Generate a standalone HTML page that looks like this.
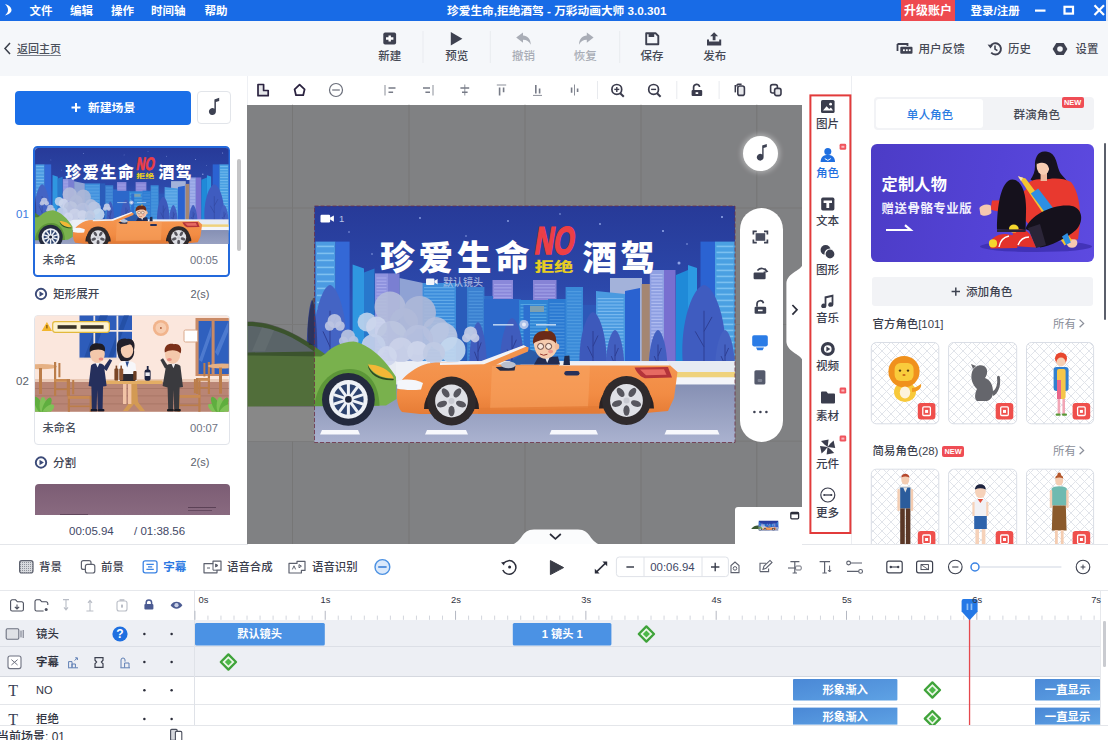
<!DOCTYPE html>
<html lang="zh"><head><meta charset="utf-8"><title>万彩动画大师</title><style>
html,body{margin:0;padding:0;background:#fff;}
body{width:1108px;height:740px;position:relative;overflow:hidden;font-family:"Liberation Sans",sans-serif;}
#app{position:absolute;left:0;top:0;width:1108px;height:740px;overflow:hidden;background:#fff;}
#app>div,#app>svg,#app>span{position:absolute;display:block;box-sizing:border-box;}
#app>span{color:transparent;white-space:nowrap;line-height:1.2;}
svg text{font-family:"Liberation Sans","Noto Sans CJK SC",sans-serif;}
</style></head><body>
<div id="app">
<div style="left:0px;top:0px;width:1108px;height:21px;background:#186be6;"></div>
<div style="left:1106px;top:0px;width:2px;height:21px;background:#dfe9f8;"></div>
<svg style="left:0px;top:0px;" width="20" height="21"><path d="M5 4 C9 5 11.5 7.5 11.5 10 C11.5 12.5 9 14.5 5 15.5 C7 13.5 8 12 8 10 C8 8 7 6 5 4Z" fill="#fff"/></svg>
<div style="left:901px;top:0px;width:54px;height:20.5px;background:#ee4a4f;"></div>
<svg style="left:0px;top:0px;" width="1108" height="21"><rect x="1035" y="9.5" width="10.5" height="2.2" fill="#fff"/><rect x="1064.5" y="6.8" width="8.5" height="6.8" fill="none" stroke="#fff" stroke-width="2.2"/><path d="M1094.5 5.2 L1104 15 M1104 5.2 L1094.5 15" stroke="#fff" stroke-width="2.2" fill="none"/></svg>
<div style="left:0px;top:21px;width:1108px;height:55px;background:#f5f7fa;"></div>
<svg style="left:0px;top:0px;" width="20" height="76"><path d="M10 43 L5 48.5 L10 54" stroke="#3a3f4a" stroke-width="1.5" fill="none"/></svg>
<div style="left:17px;top:54.6px;width:44.4px;height:1px;background:#7a7f8a;"></div>
<svg style="left:0px;top:0px;" width="1108" height="76"><rect x="383.3" y="32.6" width="12.8" height="11.9" rx="1.8" fill="#3e4150"/><path d="M386 38.5 h7.4 M389.7 35.6 v5.8" stroke="#fff" stroke-width="2.4"/><path d="M450.8 32 L462.4 38.8 L450.8 45.5Z" fill="#3e4150"/><path d="M516.2 37.6 L523 32.4 V35.6 C527.5 35.8 530.6 39 530.8 44.7 C529 41.4 526.8 39.9 523 39.8 V42.8Z" fill="#a9adb6"/><path d="M593.6 37.6 L586.8 32.4 V35.6 C582.3 35.8 579.2 39 579 44.7 C580.8 41.4 583 39.9 586.8 39.8 V42.8Z" fill="#a9adb6"/><path d="M646.2 33.2 h9.3 l2.8 2.8 v8.3 h-12.1 Z" fill="none" stroke="#3e4150" stroke-width="1.9" stroke-linejoin="round"/><rect x="648.6" y="33.4" width="5.6" height="3.6" fill="#3e4150"/><path d="M708 39.5 v5 h12.2 v-5" fill="none" stroke="#3e4150" stroke-width="2"/><rect x="708" y="41.5" width="12.2" height="3" fill="#3e4150"/><path d="M714.1 32.2 l4 4 h-2.6 v4 h-2.8 v-4 h-2.6Z" fill="#3e4150"/><rect x="422.5" y="31" width="1" height="32" fill="#e9ebef"/><rect x="489.8" y="31" width="1" height="32" fill="#e9ebef"/><rect x="619.2" y="31" width="1" height="32" fill="#e9ebef"/></svg>
<svg style="left:0px;top:0px;" width="1108" height="76"><path d="M897.5 44 h10 v2 M897.5 44 v7" stroke="#3e4150" stroke-width="1.8" fill="none"/><rect x="900.3" y="46.8" width="12.2" height="7" rx="1" fill="#3e4150"/><rect x="903" y="49.3" width="1.8" height="1.8" fill="#fff"/><rect x="905.9" y="49.3" width="1.8" height="1.8" fill="#fff"/><rect x="908.8" y="49.3" width="1.8" height="1.8" fill="#fff"/><path d="M990.4 46.2 A5.6 5.6 0 1 1 991.2 52.6" fill="none" stroke="#3e4150" stroke-width="1.9"/><path d="M987.6 44.6 l2.8 3.8 l2.6 -3.2Z" fill="#3e4150"/><path d="M995 45.5 v3.6 l2.4 1.6" fill="none" stroke="#3e4150" stroke-width="1.6"/><path d="M1056.3 43 h7.4 l3.7 6 l-3.7 6 h-7.4 l-3.7 -6Z" fill="#3e4150"/><circle cx="1060" cy="49" r="2.8" fill="#f5f7fa"/></svg>
<div style="left:0px;top:76px;width:247.5px;height:468.5px;background:#fff;"></div>
<div style="left:14.5px;top:90.5px;width:176.5px;height:34px;background:#1b6fe8;border-radius:4px;"></div>
<svg style="left:0px;top:0px;" width="200" height="130"><path d="M71.5 107.5 h9 M76 103 v9" stroke="#fff" stroke-width="2"/></svg>
<div style="left:197px;top:91px;width:33.5px;height:33px;background:#fff;border:1px solid #e2e5ea;border-radius:4px;"></div>
<svg style="left:0px;top:0px;" width="247" height="130"><path d="M214.4 99.4 l4.8 -1.6 v3.2 l-3.3 1.1 v9.4 a3.5 3.5 0 1 1 -1.5 -2.8Z" fill="#3d4152"/></svg>
<div style="left:237.4px;top:159px;width:3.6px;height:92px;background:#c4c4c6;border-radius:2px;"></div>
<div style="left:33.4px;top:146.2px;width:196.8px;height:130.4px;background:#fff;border:2px solid #2369dc;border-radius:4.5px;"></div>
<svg style="left:35px;top:147.8px;border-radius:3px 3px 0 0;" preserveAspectRatio="none" width="193.6" height="96.2" viewBox="314.5 206 420.5 209"><use href="#scn"/><use href="#scntitle"/></svg>
<svg style="left:0px;top:0px;" width="247" height="480"><circle cx="41" cy="294" r="5.2" fill="#fff" stroke="#3b4a78" stroke-width="1.9"/><path d="M39.5 291.3 l4.4 2.7 l-4.4 2.7Z" fill="#3b4a78"/><circle cx="41" cy="462.5" r="5.2" fill="#fff" stroke="#3b4a78" stroke-width="1.9"/><path d="M39.5 459.8 l4.4 2.7 l-4.4 2.7Z" fill="#3b4a78"/></svg>
<div style="left:34.2px;top:314.6px;width:195.6px;height:130px;background:#fff;border:1px solid #e1e4ea;border-radius:4px;"></div>
<svg style="left:0px;top:0px;" width="247" height="420"><defs><clipPath id="t2c"><path d="M35 319 a3.6 3.6 0 0 1 3.6 -3.6 H225.2 a3.6 3.6 0 0 1 3.6 3.6 V411.8 H35Z"/></clipPath></defs><g clip-path="url(#t2c)"><rect x="35" y="315" width="194" height="97" fill="#fbe7dd"/><rect x="35" y="381" width="194" height="31" fill="#b98575"/><rect x="35" y="379" width="194" height="3" fill="#e9c9b6"/><rect x="35" y="388" width="194" height=".8" fill="#a57464"/><rect x="35" y="395.5" width="194" height=".8" fill="#a57464"/><rect x="35" y="403.5" width="194" height=".8" fill="#a57464"/><rect x="79.5" y="315" width="52.5" height="43.4" fill="#2d5cba"/><path d="M84 358 l16 -43 h8 l-16 43Z M108 358 l16 -43 h5 l-16 43Z" fill="#2450a6"/><path d="M94.3 315 v43.4 M117.4 315 v43.4 M79.5 330.8 h52.5" stroke="#f3e8e4" stroke-width="1.8"/><rect x="78.6" y="357.6" width="54.4" height="2" fill="#f0ddd2"/><rect x="195.5" y="318" width="34" height="58" fill="#c98a66"/><rect x="198.6" y="321" width="13" height="53" fill="#2f60be"/><rect x="214.6" y="321" width="15" height="53" fill="#2f60be"/><path d="M199 360 l12 -34 v10 l-9 26Z M215 352 l13 -30 v10 l-10 24Z" fill="#5a86d6" opacity=".7"/><circle cx="160.9" cy="328" r="8" fill="#f1b48c"/><circle cx="160.9" cy="328" r="5.4" fill="#f7cdb0"/><circle cx="160.9" cy="328" r="1" fill="#b0603c"/><rect x="184" y="330" width="13.6" height="12" rx="1.5" fill="#fff" stroke="#d9a98c" stroke-width="1"/><path d="M41.7 331 l5.2 -9 l5.2 9Z" fill="#f3b62c"/><rect x="46.3" y="325" width="1.2" height="3.4" fill="#7a4a10"/><rect x="52.7" y="321.7" width="56.7" height="10.6" rx="2.5" fill="#fdf3cf" stroke="#e2b93c" stroke-width="1.2"/><rect x="57.6" y="325.2" width="19" height="3.6" fill="#3a3326"/><rect x="80.6" y="325.2" width="23" height="3.6" fill="#3a3326"/><ellipse cx="42" cy="366.6" rx="15" ry="2.6" fill="#e6b184"/><rect x="39" y="368" width="3" height="26" fill="#bb7d4a"/><rect x="54" y="362" width="2.2" height="34" fill="#bb7d4a"/><rect x="58.4" y="363" width="2" height="14.28" fill="#bb7d4a"/><rect x="54" y="379" width="15" height="2.8" fill="#c98a52"/><rect x="66.8" y="379" width="2.2" height="17" fill="#bb7d4a"/><rect x="54" y="388.52" width="15" height="1.6" fill="#bb7d4a"/><rect x="67.8" y="379" width="2.2" height="34" fill="#bb7d4a"/><rect x="72.2" y="380" width="2" height="14.28" fill="#bb7d4a"/><rect x="67.8" y="396" width="24" height="2.8" fill="#c98a52"/><rect x="89.6" y="396" width="2.2" height="17" fill="#bb7d4a"/><rect x="67.8" y="405.52" width="24" height="1.6" fill="#bb7d4a"/><rect x="198.3" y="378" width="2.2" height="34" fill="#bb7d4a"/><rect x="193.9" y="379" width="2" height="14.28" fill="#bb7d4a"/><rect x="177.5" y="395" width="23" height="2.8" fill="#c98a52"/><rect x="177.5" y="395" width="2.2" height="17" fill="#bb7d4a"/><rect x="177.5" y="404.52" width="23" height="1.6" fill="#bb7d4a"/><rect x="207.8" y="362" width="2.2" height="32" fill="#bb7d4a"/><rect x="203.4" y="363" width="2" height="13.44" fill="#bb7d4a"/><rect x="196" y="378" width="14" height="2.8" fill="#c98a52"/><rect x="196" y="378" width="2.2" height="16" fill="#bb7d4a"/><rect x="196" y="386.96" width="14" height="1.6" fill="#bb7d4a"/><ellipse cx="222" cy="366" rx="14" ry="2.6" fill="#e6b184"/><rect x="219" y="367.6" width="3" height="26" fill="#bb7d4a"/><rect x="105.6" y="380.4" width="57" height="3.6" rx="1.4" fill="#e3ad64"/><path d="M131 384 h6 l1 18 l7 9 h-5 l-6 -7 l-6 7 h-5 l7 -9Z" fill="#d39a54"/><path d="M117 347 C116 340 122 337.5 127 339 C133 338 136 343 134 350 C135 355 132 360 128 361 L121 361 C118.5 358 116.5 352 117 347Z" fill="#23202a"/><ellipse cx="127" cy="350.5" rx="6.2" ry="7.4" fill="#f6cdb2"/><path d="M120 348 C121 342 127 340.5 133 343.5 C130 344.5 124 345.5 120 348Z" fill="#23202a"/><path d="M119 364 C121 360 133 360 135.5 364 L137 381 H118Z" fill="#f7f7fa"/><path d="M125.4 361.6 l1.8 6 l1.8 -6Z" fill="#2b4c8e"/><rect x="120" y="374" width="15" height="7" fill="#2b2a33"/><rect x="123" y="384" width="3.4" height="20" fill="#f2c4a6"/><rect x="128" y="384" width="3.4" height="20" fill="#f2c4a6"/><rect x="114.4" y="368.6" width="4" height="12" rx="1" fill="#7a4526"/><rect x="115.6" y="365.6" width="1.6" height="3.6" fill="#7a4526"/><rect x="119.2" y="368.6" width="4" height="12" rx="1" fill="#8a5230"/><rect x="120.4" y="365.6" width="1.6" height="3.6" fill="#8a5230"/><rect x="133.2" y="371" width="3.4" height="9.6" rx="1" fill="#6a3c22"/><rect x="144.6" y="369.4" width="6" height="11.4" rx="2" fill="#1c2240"/><rect x="146.8" y="366" width="1.8" height="4" fill="#1c2240"/><rect x="145.4" y="372.4" width="4.4" height="3.6" fill="#e9e9f0"/><path d="M91 365.5 C93 362.5 102 362.5 104 365.5 L106.6 386 L103 386.5 L102.6 409 H97.8 L97.2 390 L96.6 409 H91.8 L91.4 386.5 L88.6 386Z" fill="#252f5c"/><path d="M95.6 363 l2 4.6 l2 -4.6Z" fill="#f2f2f6"/><path d="M103 368 l6.6 -9 l2.6 1.6 l-5.6 10.4Z" fill="#252f5c"/><ellipse cx="97.4" cy="354" rx="7.4" ry="9" fill="#f4c8ab"/><path d="M89.8 352 C88.4 344 95 342.5 98.4 343.6 C104 342.8 106 347.8 104.8 351.6 C102 349 95 348.6 89.8 352Z" fill="#201c22"/><ellipse cx="101" cy="359" rx="2.4" ry="1.5" fill="#e88a7e"/><rect x="90.6" y="409" width="6.8" height="2.4" rx="1" fill="#15182c"/><rect x="97.6" y="409" width="6.8" height="2.4" rx="1" fill="#15182c"/><path d="M166 366 C168 363 178 363 180.4 366 L183 387 L179.6 387.6 L179 409 H174.2 L173.6 390 L173 409 H168.2 L167.6 387.6 L162.6 386Z" fill="#3a3a3e"/><path d="M165 368.5 l-4.6 -8.6 l2.6 -1.6 l5.6 8.6Z" fill="#3a3a3e"/><path d="M171.4 363.6 l2 4.6 l2 -4.6Z" fill="#eeeef2"/><ellipse cx="172.6" cy="354.6" rx="7.6" ry="9.2" fill="#f4c8ab"/><path d="M164.8 352.6 C163.4 344.6 170 343 174 344.2 C180 343.2 182.4 348.4 180.6 353.4 C177 349.6 170 349.2 164.8 352.6Z" fill="#7b3019"/><ellipse cx="169.4" cy="359.6" rx="2.4" ry="1.5" fill="#e88a7e"/><rect x="167" y="409" width="6.8" height="2.4" rx="1" fill="#1c1c20"/><rect x="174" y="409" width="6.8" height="2.4" rx="1" fill="#1c1c20"/><ellipse cx="43" cy="406.5" rx="3.4" ry="7.5" fill="#7fc257" transform="rotate(-50 43 414)"/><ellipse cx="43" cy="404.5" rx="3.4" ry="9.5" fill="#5fae3f" transform="rotate(-25 43 414)"/><ellipse cx="43" cy="405.5" rx="3.4" ry="8.5" fill="#7fc257" transform="rotate(0 43 414)"/><ellipse cx="43" cy="405" rx="3.4" ry="9" fill="#5fae3f" transform="rotate(25 43 414)"/><ellipse cx="43" cy="407" rx="3.4" ry="7" fill="#7fc257" transform="rotate(50 43 414)"/><ellipse cx="220" cy="406.5" rx="3.4" ry="7.5" fill="#7fc257" transform="rotate(-50 220 414)"/><ellipse cx="220" cy="404.5" rx="3.4" ry="9.5" fill="#5fae3f" transform="rotate(-25 220 414)"/><ellipse cx="220" cy="405.5" rx="3.4" ry="8.5" fill="#7fc257" transform="rotate(0 220 414)"/><ellipse cx="220" cy="405" rx="3.4" ry="9" fill="#5fae3f" transform="rotate(25 220 414)"/><ellipse cx="220" cy="407" rx="3.4" ry="7" fill="#7fc257" transform="rotate(50 220 414)"/></g></svg>
<div style="left:34.5px;top:484px;width:195px;height:31px;background:linear-gradient(#7c5d74,#896a80);border-radius:4px 4px 0 0;"></div>
<div style="left:188px;top:506.5px;width:28px;height:1.2px;background:rgba(40,20,40,.45);"></div>
<div style="left:188px;top:510px;width:24px;height:1.2px;background:rgba(40,20,40,.35);"></div>
<div style="left:60px;top:513.6px;width:28px;height:1.2px;background:rgba(40,20,40,.4);"></div>
<div style="left:0px;top:515px;width:247.5px;height:29px;background:#fff;"></div>
<div style="left:247.5px;top:76px;width:554.5px;height:28.6px;background:#fff;"></div>
<div style="left:247px;top:76px;width:1px;height:29px;background:#eef0f4;"></div>
<svg style="left:0px;top:0px;" width="1108" height="110"><path d="M258 84.5 h5.6 v6 h4.6 v5.2 h-10.2Z" fill="#e6e7ea" stroke="#2b2340" stroke-width="1.7" stroke-linejoin="round"/><path d="M299.6 84.6 L304.6 89.4 L303.2 95.2 H296 L294.6 89.4Z" fill="none" stroke="#2b2340" stroke-width="1.8" stroke-linejoin="round"/><circle cx="336" cy="90" r="6.5" fill="none" stroke="#6a6e7a" stroke-width="1.2"/><path d="M332.2 90 h7.6" stroke="#6a6e7a" stroke-width="1.2"/><path d="M385 85 v10.5" stroke="#8b8f99" stroke-width="1"/><path d="M388.5 88 h7 M388.5 92.2 h4.6" stroke="#777b87" stroke-width="1.6"/><path d="M433 85 v10.5" stroke="#8b8f99" stroke-width="1"/><path d="M423 88 h7 M425.4 92.2 h4.6" stroke="#777b87" stroke-width="1.6"/><path d="M464.8 84.5 v11" stroke="#8b8f99" stroke-width="1"/><path d="M460.4 88 h8.8 M462 92.2 h5.6" stroke="#777b87" stroke-width="1.6"/><path d="M496.8 85 h9.4" stroke="#8b8f99" stroke-width="1"/><path d="M499.6 87.6 v8 M503.6 87.6 v4.6" stroke="#777b87" stroke-width="1.6"/><path d="M533 95.4 h9" stroke="#8b8f99" stroke-width="1"/><path d="M535.8 85 v8.4 M539.6 88.6 v4.8" stroke="#777b87" stroke-width="1.6"/><path d="M574.5 84.5 v11" stroke="#8b8f99" stroke-width="1"/><path d="M571.6 87.4 v5.4 M577.6 88.4 v3.6" stroke="#777b87" stroke-width="1.6"/><rect x="597" y="81" width="1" height="18" fill="#e8eaee"/><rect x="676.3" y="81" width="1" height="18" fill="#e8eaee"/><rect x="718.6" y="81" width="1" height="18" fill="#e8eaee"/><circle cx="616.8" cy="89.4" r="4.9" fill="none" stroke="#3a3b4c" stroke-width="1.7"/><path d="M620.2 93.2 l3.6 3.6" stroke="#3a3b4c" stroke-width="2"/><path d="M614.3 89.4 h5" stroke="#3a3b4c" stroke-width="1.4"/><path d="M616.8 86.9 v5" stroke="#3a3b4c" stroke-width="1.4"/><circle cx="653.6" cy="89.4" r="4.9" fill="none" stroke="#3a3b4c" stroke-width="1.7"/><path d="M657 93.2 l3.6 3.6" stroke="#3a3b4c" stroke-width="2"/><path d="M651.1 89.4 h5" stroke="#3a3b4c" stroke-width="1.4"/><rect x="691.6" y="90" width="10.6" height="6" rx="1" fill="#3a3b4c"/><path d="M693.6 90 v-2.4 a3 3 0 0 1 6 -0.6" fill="none" stroke="#3a3b4c" stroke-width="1.7"/><rect x="695.6" y="92.2" width="2.6" height="1.8" fill="#fff"/><path d="M737 86.6 v-1.4 a1 1 0 0 1 1 -1 h3.6" fill="none" stroke="#3a3b4c" stroke-width="1.5"/><rect x="737.8" y="86" width="6.6" height="9.4" rx="2" fill="#e8e9ec" stroke="#3a3b4c" stroke-width="1.6"/><path d="M735.3 85 v7.4" stroke="#3a3b4c" stroke-width="1.5"/><rect x="770.6" y="84.6" width="6.8" height="8.4" rx="2" fill="none" stroke="#3a3b4c" stroke-width="1.6"/><rect x="774.6" y="88.4" width="6.4" height="7.2" rx="2" fill="#e8e9ec" stroke="#3a3b4c" stroke-width="1.6"/></svg>
<div style="left:247px;top:104.6px;width:555px;height:440px;background:#808183;"></div>
<svg style="left:0px;top:0px;" width="1108" height="740"><defs><clipPath id="cvclip"><rect x="247.5" y="104.6" width="554.5" height="440"/></clipPath></defs><g clip-path="url(#cvclip)"><rect x="292" y="104.6" width="1" height="440" fill="#767676"/><rect x="408.5" y="104.6" width="1" height="440" fill="#767676"/><rect x="524.5" y="104.6" width="1" height="440" fill="#767676"/><rect x="640.5" y="104.6" width="1" height="440" fill="#767676"/><rect x="756.3" y="104.6" width="1" height="440" fill="#767676"/><rect x="247.5" y="207.5" width="554.5" height="1" fill="#797979"/><rect x="247.5" y="324" width="554.5" height="1" fill="#797979"/><rect x="247.5" y="440.7" width="554.5" height="1" fill="#797979"/><rect x="247.5" y="406" width="67" height="35" fill="#888888"/><g id="scn"><defs><linearGradient id="sky" x1="0" y1="0" x2="0" y2="1"><stop offset="0" stop-color="#273a98"/><stop offset="0.45" stop-color="#2c48aa"/><stop offset="1" stop-color="#3f6fca"/></linearGradient><linearGradient id="road" x1="0" y1="0" x2="0" y2="1"><stop offset="0" stop-color="#8690b4"/><stop offset="1" stop-color="#aab2cf"/></linearGradient><linearGradient id="orng" x1="0" y1="0" x2="0" y2="1"><stop offset="0" stop-color="#f69a55"/><stop offset="0.7" stop-color="#f28c44"/><stop offset="1" stop-color="#e67c36"/></linearGradient></defs><rect x="314.5" y="206" width="420.5" height="180" fill="url(#sky)"/><circle cx="420" cy="218" r="0.9" fill="#8fa4e6"/><circle cx="466" cy="236" r="0.8" fill="#8fa4e6"/><circle cx="372" cy="254" r="0.8" fill="#8fa4e6"/><circle cx="508" cy="221" r="0.9" fill="#8fa4e6"/><circle cx="600" cy="224" r="0.9" fill="#8fa4e6"/><circle cx="663" cy="231" r="1.1" fill="#8fa4e6"/><circle cx="679" cy="263" r="1.5" fill="#8fa4e6"/><circle cx="722" cy="217" r="1.1" fill="#8fa4e6"/><circle cx="640" cy="246" r="0.8" fill="#8fa4e6"/><circle cx="349" cy="232" r="0.8" fill="#8fa4e6"/><circle cx="560" cy="214" r="0.8" fill="#8fa4e6"/><circle cx="687" cy="244" r="0.8" fill="#8fa4e6"/><rect x="492.5" y="280" width="20.5" height="110" fill="#8a88da"/><rect x="494" y="284" width="17.5" height="1.2" fill="#a3a2e8"/><rect x="494" y="287.2" width="17.5" height="1.2" fill="#a3a2e8"/><rect x="494" y="290.4" width="17.5" height="1.2" fill="#a3a2e8"/><rect x="494" y="293.6" width="17.5" height="1.2" fill="#a3a2e8"/><rect x="494" y="296.8" width="17.5" height="1.2" fill="#a3a2e8"/><rect x="494" y="300" width="17.5" height="1.2" fill="#a3a2e8"/><rect x="494" y="303.2" width="17.5" height="1.2" fill="#a3a2e8"/><rect x="494" y="306.4" width="17.5" height="1.2" fill="#a3a2e8"/><rect x="494" y="309.6" width="17.5" height="1.2" fill="#a3a2e8"/><rect x="494" y="312.8" width="17.5" height="1.2" fill="#a3a2e8"/><rect x="494" y="316" width="17.5" height="1.2" fill="#a3a2e8"/><rect x="494" y="319.2" width="17.5" height="1.2" fill="#a3a2e8"/><rect x="494" y="322.4" width="17.5" height="1.2" fill="#a3a2e8"/><rect x="494" y="325.6" width="17.5" height="1.2" fill="#a3a2e8"/><rect x="494" y="328.8" width="17.5" height="1.2" fill="#a3a2e8"/><rect x="494" y="332" width="17.5" height="1.2" fill="#a3a2e8"/><rect x="494" y="335.2" width="17.5" height="1.2" fill="#a3a2e8"/><rect x="494" y="338.4" width="17.5" height="1.2" fill="#a3a2e8"/><rect x="494" y="341.6" width="17.5" height="1.2" fill="#a3a2e8"/><rect x="494" y="344.8" width="17.5" height="1.2" fill="#a3a2e8"/><rect x="494" y="348" width="17.5" height="1.2" fill="#a3a2e8"/><rect x="494" y="351.2" width="17.5" height="1.2" fill="#a3a2e8"/><rect x="494" y="354.4" width="17.5" height="1.2" fill="#a3a2e8"/><rect x="494" y="357.6" width="17.5" height="1.2" fill="#a3a2e8"/><rect x="494" y="360.8" width="17.5" height="1.2" fill="#a3a2e8"/><rect x="494" y="364" width="17.5" height="1.2" fill="#a3a2e8"/><rect x="494" y="367.2" width="17.5" height="1.2" fill="#a3a2e8"/><rect x="494" y="370.4" width="17.5" height="1.2" fill="#a3a2e8"/><rect x="494" y="373.6" width="17.5" height="1.2" fill="#a3a2e8"/><rect x="494" y="376.8" width="17.5" height="1.2" fill="#a3a2e8"/><rect x="494" y="380" width="17.5" height="1.2" fill="#a3a2e8"/><rect x="494" y="383.2" width="17.5" height="1.2" fill="#a3a2e8"/><rect x="533" y="280" width="23.5" height="110" fill="#8683d6"/><rect x="534.5" y="284" width="20.5" height="1.2" fill="#a09fe6"/><rect x="534.5" y="287.2" width="20.5" height="1.2" fill="#a09fe6"/><rect x="534.5" y="290.4" width="20.5" height="1.2" fill="#a09fe6"/><rect x="534.5" y="293.6" width="20.5" height="1.2" fill="#a09fe6"/><rect x="534.5" y="296.8" width="20.5" height="1.2" fill="#a09fe6"/><rect x="534.5" y="300" width="20.5" height="1.2" fill="#a09fe6"/><rect x="534.5" y="303.2" width="20.5" height="1.2" fill="#a09fe6"/><rect x="534.5" y="306.4" width="20.5" height="1.2" fill="#a09fe6"/><rect x="534.5" y="309.6" width="20.5" height="1.2" fill="#a09fe6"/><rect x="534.5" y="312.8" width="20.5" height="1.2" fill="#a09fe6"/><rect x="534.5" y="316" width="20.5" height="1.2" fill="#a09fe6"/><rect x="534.5" y="319.2" width="20.5" height="1.2" fill="#a09fe6"/><rect x="534.5" y="322.4" width="20.5" height="1.2" fill="#a09fe6"/><rect x="534.5" y="325.6" width="20.5" height="1.2" fill="#a09fe6"/><rect x="534.5" y="328.8" width="20.5" height="1.2" fill="#a09fe6"/><rect x="534.5" y="332" width="20.5" height="1.2" fill="#a09fe6"/><rect x="534.5" y="335.2" width="20.5" height="1.2" fill="#a09fe6"/><rect x="534.5" y="338.4" width="20.5" height="1.2" fill="#a09fe6"/><rect x="534.5" y="341.6" width="20.5" height="1.2" fill="#a09fe6"/><rect x="534.5" y="344.8" width="20.5" height="1.2" fill="#a09fe6"/><rect x="534.5" y="348" width="20.5" height="1.2" fill="#a09fe6"/><rect x="534.5" y="351.2" width="20.5" height="1.2" fill="#a09fe6"/><rect x="534.5" y="354.4" width="20.5" height="1.2" fill="#a09fe6"/><rect x="534.5" y="357.6" width="20.5" height="1.2" fill="#a09fe6"/><rect x="534.5" y="360.8" width="20.5" height="1.2" fill="#a09fe6"/><rect x="534.5" y="364" width="20.5" height="1.2" fill="#a09fe6"/><rect x="534.5" y="367.2" width="20.5" height="1.2" fill="#a09fe6"/><rect x="534.5" y="370.4" width="20.5" height="1.2" fill="#a09fe6"/><rect x="534.5" y="373.6" width="20.5" height="1.2" fill="#a09fe6"/><rect x="534.5" y="376.8" width="20.5" height="1.2" fill="#a09fe6"/><rect x="534.5" y="380" width="20.5" height="1.2" fill="#a09fe6"/><rect x="534.5" y="383.2" width="20.5" height="1.2" fill="#a09fe6"/><rect x="349.6" y="300" width="3.4" height="90" fill="#2a54b4"/><rect x="484" y="296" width="9" height="94" fill="#2f6cc8"/><rect x="548" y="299" width="12" height="91" fill="#2b7ad2"/><rect x="583" y="305" width="14" height="85" fill="#2d58b8"/><rect x="315.5" y="241.6" width="20" height="148.4" fill="#4c9be2"/><rect x="317" y="245.6" width="17" height="1.6" fill="#7fc0f0"/><rect x="317" y="252.6" width="17" height="1.6" fill="#7fc0f0"/><rect x="317" y="259.6" width="17" height="1.6" fill="#7fc0f0"/><rect x="317" y="266.6" width="17" height="1.6" fill="#7fc0f0"/><rect x="317" y="273.6" width="17" height="1.6" fill="#7fc0f0"/><rect x="317" y="280.6" width="17" height="1.6" fill="#7fc0f0"/><rect x="317" y="287.6" width="17" height="1.6" fill="#7fc0f0"/><rect x="317" y="294.6" width="17" height="1.6" fill="#7fc0f0"/><rect x="317" y="301.6" width="17" height="1.6" fill="#7fc0f0"/><rect x="317" y="308.6" width="17" height="1.6" fill="#7fc0f0"/><rect x="317" y="315.6" width="17" height="1.6" fill="#7fc0f0"/><rect x="317" y="322.6" width="17" height="1.6" fill="#7fc0f0"/><rect x="317" y="329.6" width="17" height="1.6" fill="#7fc0f0"/><rect x="317" y="336.6" width="17" height="1.6" fill="#7fc0f0"/><rect x="317" y="343.6" width="17" height="1.6" fill="#7fc0f0"/><rect x="317" y="350.6" width="17" height="1.6" fill="#7fc0f0"/><rect x="317" y="357.6" width="17" height="1.6" fill="#7fc0f0"/><rect x="317" y="364.6" width="17" height="1.6" fill="#7fc0f0"/><rect x="317" y="371.6" width="17" height="1.6" fill="#7fc0f0"/><rect x="317" y="378.6" width="17" height="1.6" fill="#7fc0f0"/><rect x="335.5" y="241.6" width="14.1" height="148.4" fill="#3468d6"/><path d="M352.6 264.5 L364 268.5 L364 390 L352.6 390Z" fill="#2f97e0"/><path d="M364 272.5 L374.5 268.5 L374.5 390 L364 390Z" fill="#2878cc"/><rect x="375" y="273.4" width="13" height="116.6" fill="#8e92de"/><rect x="376.5" y="277.4" width="10" height="1.2" fill="#a6a8ea"/><rect x="376.5" y="280.6" width="10" height="1.2" fill="#a6a8ea"/><rect x="376.5" y="283.8" width="10" height="1.2" fill="#a6a8ea"/><rect x="376.5" y="287" width="10" height="1.2" fill="#a6a8ea"/><rect x="376.5" y="290.2" width="10" height="1.2" fill="#a6a8ea"/><rect x="376.5" y="293.4" width="10" height="1.2" fill="#a6a8ea"/><rect x="376.5" y="296.6" width="10" height="1.2" fill="#a6a8ea"/><rect x="376.5" y="299.8" width="10" height="1.2" fill="#a6a8ea"/><rect x="376.5" y="303" width="10" height="1.2" fill="#a6a8ea"/><rect x="376.5" y="306.2" width="10" height="1.2" fill="#a6a8ea"/><rect x="376.5" y="309.4" width="10" height="1.2" fill="#a6a8ea"/><rect x="376.5" y="312.6" width="10" height="1.2" fill="#a6a8ea"/><rect x="376.5" y="315.8" width="10" height="1.2" fill="#a6a8ea"/><rect x="376.5" y="319" width="10" height="1.2" fill="#a6a8ea"/><rect x="376.5" y="322.2" width="10" height="1.2" fill="#a6a8ea"/><rect x="376.5" y="325.4" width="10" height="1.2" fill="#a6a8ea"/><rect x="376.5" y="328.6" width="10" height="1.2" fill="#a6a8ea"/><rect x="376.5" y="331.8" width="10" height="1.2" fill="#a6a8ea"/><rect x="376.5" y="335" width="10" height="1.2" fill="#a6a8ea"/><rect x="376.5" y="338.2" width="10" height="1.2" fill="#a6a8ea"/><rect x="376.5" y="341.4" width="10" height="1.2" fill="#a6a8ea"/><rect x="376.5" y="344.6" width="10" height="1.2" fill="#a6a8ea"/><rect x="376.5" y="347.8" width="10" height="1.2" fill="#a6a8ea"/><rect x="376.5" y="351" width="10" height="1.2" fill="#a6a8ea"/><rect x="376.5" y="354.2" width="10" height="1.2" fill="#a6a8ea"/><rect x="376.5" y="357.4" width="10" height="1.2" fill="#a6a8ea"/><rect x="376.5" y="360.6" width="10" height="1.2" fill="#a6a8ea"/><rect x="376.5" y="363.8" width="10" height="1.2" fill="#a6a8ea"/><rect x="376.5" y="367" width="10" height="1.2" fill="#a6a8ea"/><rect x="376.5" y="370.2" width="10" height="1.2" fill="#a6a8ea"/><rect x="376.5" y="373.4" width="10" height="1.2" fill="#a6a8ea"/><rect x="376.5" y="376.6" width="10" height="1.2" fill="#a6a8ea"/><rect x="376.5" y="379.8" width="10" height="1.2" fill="#a6a8ea"/><rect x="376.5" y="383" width="10" height="1.2" fill="#a6a8ea"/><rect x="388" y="273.4" width="11.5" height="116.6" fill="#7a7fd2"/><path d="M399.5 278 L423 283 L423 390 L399.5 390Z" fill="#8fa2d4"/><rect x="422.6" y="283" width="33.4" height="107" fill="#3d8ddb"/><rect x="424.1" y="287" width="30.4" height="1.2" fill="#62aae8"/><rect x="424.1" y="290.2" width="30.4" height="1.2" fill="#62aae8"/><rect x="424.1" y="293.4" width="30.4" height="1.2" fill="#62aae8"/><rect x="424.1" y="296.6" width="30.4" height="1.2" fill="#62aae8"/><rect x="424.1" y="299.8" width="30.4" height="1.2" fill="#62aae8"/><rect x="424.1" y="303" width="30.4" height="1.2" fill="#62aae8"/><rect x="424.1" y="306.2" width="30.4" height="1.2" fill="#62aae8"/><rect x="424.1" y="309.4" width="30.4" height="1.2" fill="#62aae8"/><rect x="424.1" y="312.6" width="30.4" height="1.2" fill="#62aae8"/><rect x="424.1" y="315.8" width="30.4" height="1.2" fill="#62aae8"/><rect x="424.1" y="319" width="30.4" height="1.2" fill="#62aae8"/><rect x="424.1" y="322.2" width="30.4" height="1.2" fill="#62aae8"/><rect x="424.1" y="325.4" width="30.4" height="1.2" fill="#62aae8"/><rect x="424.1" y="328.6" width="30.4" height="1.2" fill="#62aae8"/><rect x="424.1" y="331.8" width="30.4" height="1.2" fill="#62aae8"/><rect x="424.1" y="335" width="30.4" height="1.2" fill="#62aae8"/><rect x="424.1" y="338.2" width="30.4" height="1.2" fill="#62aae8"/><rect x="424.1" y="341.4" width="30.4" height="1.2" fill="#62aae8"/><rect x="424.1" y="344.6" width="30.4" height="1.2" fill="#62aae8"/><rect x="424.1" y="347.8" width="30.4" height="1.2" fill="#62aae8"/><rect x="424.1" y="351" width="30.4" height="1.2" fill="#62aae8"/><rect x="424.1" y="354.2" width="30.4" height="1.2" fill="#62aae8"/><rect x="424.1" y="357.4" width="30.4" height="1.2" fill="#62aae8"/><rect x="424.1" y="360.6" width="30.4" height="1.2" fill="#62aae8"/><rect x="424.1" y="363.8" width="30.4" height="1.2" fill="#62aae8"/><rect x="424.1" y="367" width="30.4" height="1.2" fill="#62aae8"/><rect x="424.1" y="370.2" width="30.4" height="1.2" fill="#62aae8"/><rect x="424.1" y="373.4" width="30.4" height="1.2" fill="#62aae8"/><rect x="424.1" y="376.6" width="30.4" height="1.2" fill="#62aae8"/><rect x="424.1" y="379.8" width="30.4" height="1.2" fill="#62aae8"/><rect x="424.1" y="383" width="30.4" height="1.2" fill="#62aae8"/><rect x="456" y="283" width="11" height="107" fill="#2a5cba"/><rect x="467" y="287" width="17.4" height="103" fill="#3a80d0"/><rect x="468.5" y="291" width="14.4" height="1.2" fill="#4f94dc"/><rect x="468.5" y="294.2" width="14.4" height="1.2" fill="#4f94dc"/><rect x="468.5" y="297.4" width="14.4" height="1.2" fill="#4f94dc"/><rect x="468.5" y="300.6" width="14.4" height="1.2" fill="#4f94dc"/><rect x="468.5" y="303.8" width="14.4" height="1.2" fill="#4f94dc"/><rect x="468.5" y="307" width="14.4" height="1.2" fill="#4f94dc"/><rect x="468.5" y="310.2" width="14.4" height="1.2" fill="#4f94dc"/><rect x="468.5" y="313.4" width="14.4" height="1.2" fill="#4f94dc"/><rect x="468.5" y="316.6" width="14.4" height="1.2" fill="#4f94dc"/><rect x="468.5" y="319.8" width="14.4" height="1.2" fill="#4f94dc"/><rect x="468.5" y="323" width="14.4" height="1.2" fill="#4f94dc"/><rect x="468.5" y="326.2" width="14.4" height="1.2" fill="#4f94dc"/><rect x="468.5" y="329.4" width="14.4" height="1.2" fill="#4f94dc"/><rect x="468.5" y="332.6" width="14.4" height="1.2" fill="#4f94dc"/><rect x="468.5" y="335.8" width="14.4" height="1.2" fill="#4f94dc"/><rect x="468.5" y="339" width="14.4" height="1.2" fill="#4f94dc"/><rect x="468.5" y="342.2" width="14.4" height="1.2" fill="#4f94dc"/><rect x="468.5" y="345.4" width="14.4" height="1.2" fill="#4f94dc"/><rect x="468.5" y="348.6" width="14.4" height="1.2" fill="#4f94dc"/><rect x="468.5" y="351.8" width="14.4" height="1.2" fill="#4f94dc"/><rect x="468.5" y="355" width="14.4" height="1.2" fill="#4f94dc"/><rect x="468.5" y="358.2" width="14.4" height="1.2" fill="#4f94dc"/><rect x="468.5" y="361.4" width="14.4" height="1.2" fill="#4f94dc"/><rect x="468.5" y="364.6" width="14.4" height="1.2" fill="#4f94dc"/><rect x="468.5" y="367.8" width="14.4" height="1.2" fill="#4f94dc"/><rect x="468.5" y="371" width="14.4" height="1.2" fill="#4f94dc"/><rect x="468.5" y="374.2" width="14.4" height="1.2" fill="#4f94dc"/><rect x="468.5" y="377.4" width="14.4" height="1.2" fill="#4f94dc"/><rect x="468.5" y="380.6" width="14.4" height="1.2" fill="#4f94dc"/><rect x="468.5" y="383.8" width="14.4" height="1.2" fill="#4f94dc"/><rect x="484" y="299" width="37" height="91" fill="#2c68ca"/><rect x="548" y="299" width="18" height="91" fill="#2b7ad2"/><rect x="549.5" y="303" width="15" height="1.2" fill="#4a92dc"/><rect x="549.5" y="306.2" width="15" height="1.2" fill="#4a92dc"/><rect x="549.5" y="309.4" width="15" height="1.2" fill="#4a92dc"/><rect x="549.5" y="312.6" width="15" height="1.2" fill="#4a92dc"/><rect x="549.5" y="315.8" width="15" height="1.2" fill="#4a92dc"/><rect x="549.5" y="319" width="15" height="1.2" fill="#4a92dc"/><rect x="549.5" y="322.2" width="15" height="1.2" fill="#4a92dc"/><rect x="549.5" y="325.4" width="15" height="1.2" fill="#4a92dc"/><rect x="549.5" y="328.6" width="15" height="1.2" fill="#4a92dc"/><rect x="549.5" y="331.8" width="15" height="1.2" fill="#4a92dc"/><rect x="549.5" y="335" width="15" height="1.2" fill="#4a92dc"/><rect x="549.5" y="338.2" width="15" height="1.2" fill="#4a92dc"/><rect x="549.5" y="341.4" width="15" height="1.2" fill="#4a92dc"/><rect x="549.5" y="344.6" width="15" height="1.2" fill="#4a92dc"/><rect x="549.5" y="347.8" width="15" height="1.2" fill="#4a92dc"/><rect x="549.5" y="351" width="15" height="1.2" fill="#4a92dc"/><rect x="549.5" y="354.2" width="15" height="1.2" fill="#4a92dc"/><rect x="549.5" y="357.4" width="15" height="1.2" fill="#4a92dc"/><rect x="549.5" y="360.6" width="15" height="1.2" fill="#4a92dc"/><rect x="549.5" y="363.8" width="15" height="1.2" fill="#4a92dc"/><rect x="549.5" y="367" width="15" height="1.2" fill="#4a92dc"/><rect x="549.5" y="370.2" width="15" height="1.2" fill="#4a92dc"/><rect x="549.5" y="373.4" width="15" height="1.2" fill="#4a92dc"/><rect x="549.5" y="376.6" width="15" height="1.2" fill="#4a92dc"/><rect x="549.5" y="379.8" width="15" height="1.2" fill="#4a92dc"/><rect x="549.5" y="383" width="15" height="1.2" fill="#4a92dc"/><rect x="519" y="300" width="29" height="90" fill="#2f84d4"/><rect x="520.5" y="304" width="26" height="1.2" fill="#56a6e4"/><rect x="520.5" y="307.2" width="26" height="1.2" fill="#56a6e4"/><rect x="520.5" y="310.4" width="26" height="1.2" fill="#56a6e4"/><rect x="520.5" y="313.6" width="26" height="1.2" fill="#56a6e4"/><rect x="520.5" y="316.8" width="26" height="1.2" fill="#56a6e4"/><rect x="520.5" y="320" width="26" height="1.2" fill="#56a6e4"/><rect x="520.5" y="323.2" width="26" height="1.2" fill="#56a6e4"/><rect x="520.5" y="326.4" width="26" height="1.2" fill="#56a6e4"/><rect x="520.5" y="329.6" width="26" height="1.2" fill="#56a6e4"/><rect x="520.5" y="332.8" width="26" height="1.2" fill="#56a6e4"/><rect x="520.5" y="336" width="26" height="1.2" fill="#56a6e4"/><rect x="520.5" y="339.2" width="26" height="1.2" fill="#56a6e4"/><rect x="520.5" y="342.4" width="26" height="1.2" fill="#56a6e4"/><rect x="520.5" y="345.6" width="26" height="1.2" fill="#56a6e4"/><rect x="520.5" y="348.8" width="26" height="1.2" fill="#56a6e4"/><rect x="520.5" y="352" width="26" height="1.2" fill="#56a6e4"/><rect x="520.5" y="355.2" width="26" height="1.2" fill="#56a6e4"/><rect x="520.5" y="358.4" width="26" height="1.2" fill="#56a6e4"/><rect x="520.5" y="361.6" width="26" height="1.2" fill="#56a6e4"/><rect x="520.5" y="364.8" width="26" height="1.2" fill="#56a6e4"/><rect x="520.5" y="368" width="26" height="1.2" fill="#56a6e4"/><rect x="520.5" y="371.2" width="26" height="1.2" fill="#56a6e4"/><rect x="520.5" y="374.4" width="26" height="1.2" fill="#56a6e4"/><rect x="520.5" y="377.6" width="26" height="1.2" fill="#56a6e4"/><rect x="520.5" y="380.8" width="26" height="1.2" fill="#56a6e4"/><rect x="520.5" y="384" width="26" height="1.2" fill="#56a6e4"/><rect x="525" y="306" width="19" height="6" fill="#7da0b0"/><rect x="523.5" y="305" width="6.5" height="60" fill="#2d6fd0"/><rect x="565.6" y="287" width="17.4" height="103" fill="#3a8ad8"/><rect x="567.1" y="291" width="14.4" height="1.2" fill="#4f9be0"/><rect x="567.1" y="294.2" width="14.4" height="1.2" fill="#4f9be0"/><rect x="567.1" y="297.4" width="14.4" height="1.2" fill="#4f9be0"/><rect x="567.1" y="300.6" width="14.4" height="1.2" fill="#4f9be0"/><rect x="567.1" y="303.8" width="14.4" height="1.2" fill="#4f9be0"/><rect x="567.1" y="307" width="14.4" height="1.2" fill="#4f9be0"/><rect x="567.1" y="310.2" width="14.4" height="1.2" fill="#4f9be0"/><rect x="567.1" y="313.4" width="14.4" height="1.2" fill="#4f9be0"/><rect x="567.1" y="316.6" width="14.4" height="1.2" fill="#4f9be0"/><rect x="567.1" y="319.8" width="14.4" height="1.2" fill="#4f9be0"/><rect x="567.1" y="323" width="14.4" height="1.2" fill="#4f9be0"/><rect x="567.1" y="326.2" width="14.4" height="1.2" fill="#4f9be0"/><rect x="567.1" y="329.4" width="14.4" height="1.2" fill="#4f9be0"/><rect x="567.1" y="332.6" width="14.4" height="1.2" fill="#4f9be0"/><rect x="567.1" y="335.8" width="14.4" height="1.2" fill="#4f9be0"/><rect x="567.1" y="339" width="14.4" height="1.2" fill="#4f9be0"/><rect x="567.1" y="342.2" width="14.4" height="1.2" fill="#4f9be0"/><rect x="567.1" y="345.4" width="14.4" height="1.2" fill="#4f9be0"/><rect x="567.1" y="348.6" width="14.4" height="1.2" fill="#4f9be0"/><rect x="567.1" y="351.8" width="14.4" height="1.2" fill="#4f9be0"/><rect x="567.1" y="355" width="14.4" height="1.2" fill="#4f9be0"/><rect x="567.1" y="358.2" width="14.4" height="1.2" fill="#4f9be0"/><rect x="567.1" y="361.4" width="14.4" height="1.2" fill="#4f9be0"/><rect x="567.1" y="364.6" width="14.4" height="1.2" fill="#4f9be0"/><rect x="567.1" y="367.8" width="14.4" height="1.2" fill="#4f9be0"/><rect x="567.1" y="371" width="14.4" height="1.2" fill="#4f9be0"/><rect x="567.1" y="374.2" width="14.4" height="1.2" fill="#4f9be0"/><rect x="567.1" y="377.4" width="14.4" height="1.2" fill="#4f9be0"/><rect x="567.1" y="380.6" width="14.4" height="1.2" fill="#4f9be0"/><rect x="567.1" y="383.8" width="14.4" height="1.2" fill="#4f9be0"/><rect x="610" y="278" width="32" height="112" fill="#a3b2da"/><rect x="641.7" y="284" width="8.3" height="106" fill="#a48672"/><path d="M596 291 L625 294 L625 390 L596 390Z" fill="#4a9ae0"/><rect x="597.5" y="298" width="26" height="1.2" fill="#78b8ee"/><rect x="597.5" y="301.2" width="26" height="1.2" fill="#78b8ee"/><rect x="597.5" y="304.4" width="26" height="1.2" fill="#78b8ee"/><rect x="597.5" y="307.6" width="26" height="1.2" fill="#78b8ee"/><rect x="597.5" y="310.8" width="26" height="1.2" fill="#78b8ee"/><rect x="597.5" y="314" width="26" height="1.2" fill="#78b8ee"/><rect x="597.5" y="317.2" width="26" height="1.2" fill="#78b8ee"/><rect x="597.5" y="320.4" width="26" height="1.2" fill="#78b8ee"/><rect x="597.5" y="323.6" width="26" height="1.2" fill="#78b8ee"/><rect x="597.5" y="326.8" width="26" height="1.2" fill="#78b8ee"/><rect x="597.5" y="330" width="26" height="1.2" fill="#78b8ee"/><rect x="597.5" y="333.2" width="26" height="1.2" fill="#78b8ee"/><rect x="597.5" y="336.4" width="26" height="1.2" fill="#78b8ee"/><rect x="597.5" y="339.6" width="26" height="1.2" fill="#78b8ee"/><rect x="597.5" y="342.8" width="26" height="1.2" fill="#78b8ee"/><rect x="597.5" y="346" width="26" height="1.2" fill="#78b8ee"/><rect x="597.5" y="349.2" width="26" height="1.2" fill="#78b8ee"/><rect x="597.5" y="352.4" width="26" height="1.2" fill="#78b8ee"/><rect x="597.5" y="355.6" width="26" height="1.2" fill="#78b8ee"/><rect x="597.5" y="358.8" width="26" height="1.2" fill="#78b8ee"/><rect x="597.5" y="362" width="26" height="1.2" fill="#78b8ee"/><rect x="597.5" y="365.2" width="26" height="1.2" fill="#78b8ee"/><rect x="597.5" y="368.4" width="26" height="1.2" fill="#78b8ee"/><rect x="597.5" y="371.6" width="26" height="1.2" fill="#78b8ee"/><rect x="597.5" y="374.8" width="26" height="1.2" fill="#78b8ee"/><rect x="597.5" y="378" width="26" height="1.2" fill="#78b8ee"/><rect x="597.5" y="381.2" width="26" height="1.2" fill="#78b8ee"/><rect x="597.5" y="384.4" width="26" height="1.2" fill="#78b8ee"/><path d="M625 291 L640 288 L640 390 L625 390Z" fill="#2a62d0"/><rect x="649.8" y="270" width="14.2" height="120" fill="#8e9fe2"/><rect x="651.3" y="274" width="11.2" height="1.2" fill="#b0bcf0"/><rect x="651.3" y="277.2" width="11.2" height="1.2" fill="#b0bcf0"/><rect x="651.3" y="280.4" width="11.2" height="1.2" fill="#b0bcf0"/><rect x="651.3" y="283.6" width="11.2" height="1.2" fill="#b0bcf0"/><rect x="651.3" y="286.8" width="11.2" height="1.2" fill="#b0bcf0"/><rect x="651.3" y="290" width="11.2" height="1.2" fill="#b0bcf0"/><rect x="651.3" y="293.2" width="11.2" height="1.2" fill="#b0bcf0"/><rect x="651.3" y="296.4" width="11.2" height="1.2" fill="#b0bcf0"/><rect x="651.3" y="299.6" width="11.2" height="1.2" fill="#b0bcf0"/><rect x="651.3" y="302.8" width="11.2" height="1.2" fill="#b0bcf0"/><rect x="651.3" y="306" width="11.2" height="1.2" fill="#b0bcf0"/><rect x="651.3" y="309.2" width="11.2" height="1.2" fill="#b0bcf0"/><rect x="651.3" y="312.4" width="11.2" height="1.2" fill="#b0bcf0"/><rect x="651.3" y="315.6" width="11.2" height="1.2" fill="#b0bcf0"/><rect x="651.3" y="318.8" width="11.2" height="1.2" fill="#b0bcf0"/><rect x="651.3" y="322" width="11.2" height="1.2" fill="#b0bcf0"/><rect x="651.3" y="325.2" width="11.2" height="1.2" fill="#b0bcf0"/><rect x="651.3" y="328.4" width="11.2" height="1.2" fill="#b0bcf0"/><rect x="651.3" y="331.6" width="11.2" height="1.2" fill="#b0bcf0"/><rect x="651.3" y="334.8" width="11.2" height="1.2" fill="#b0bcf0"/><rect x="651.3" y="338" width="11.2" height="1.2" fill="#b0bcf0"/><rect x="651.3" y="341.2" width="11.2" height="1.2" fill="#b0bcf0"/><rect x="651.3" y="344.4" width="11.2" height="1.2" fill="#b0bcf0"/><rect x="651.3" y="347.6" width="11.2" height="1.2" fill="#b0bcf0"/><rect x="651.3" y="350.8" width="11.2" height="1.2" fill="#b0bcf0"/><rect x="651.3" y="354" width="11.2" height="1.2" fill="#b0bcf0"/><rect x="651.3" y="357.2" width="11.2" height="1.2" fill="#b0bcf0"/><rect x="651.3" y="360.4" width="11.2" height="1.2" fill="#b0bcf0"/><rect x="651.3" y="363.6" width="11.2" height="1.2" fill="#b0bcf0"/><rect x="651.3" y="366.8" width="11.2" height="1.2" fill="#b0bcf0"/><rect x="651.3" y="370" width="11.2" height="1.2" fill="#b0bcf0"/><rect x="651.3" y="373.2" width="11.2" height="1.2" fill="#b0bcf0"/><rect x="651.3" y="376.4" width="11.2" height="1.2" fill="#b0bcf0"/><rect x="651.3" y="379.6" width="11.2" height="1.2" fill="#b0bcf0"/><rect x="651.3" y="382.8" width="11.2" height="1.2" fill="#b0bcf0"/><rect x="664" y="270" width="11.5" height="120" fill="#786fd0"/><path d="M676 275 L688 270 L688 390 L676 390Z" fill="#1f8ad8"/><path d="M688 265 L697 268 L697 390 L688 390Z" fill="#2c9ae2"/><rect x="700.5" y="241.6" width="14.5" height="148.4" fill="#2b63d2"/><rect x="715" y="241.6" width="20" height="148.4" fill="#4aa0e2"/><rect x="716.5" y="245.6" width="17" height="1.6" fill="#7cc0f0"/><rect x="716.5" y="251.6" width="17" height="1.6" fill="#7cc0f0"/><rect x="716.5" y="257.6" width="17" height="1.6" fill="#7cc0f0"/><rect x="716.5" y="263.6" width="17" height="1.6" fill="#7cc0f0"/><rect x="716.5" y="269.6" width="17" height="1.6" fill="#7cc0f0"/><rect x="716.5" y="275.6" width="17" height="1.6" fill="#7cc0f0"/><rect x="716.5" y="281.6" width="17" height="1.6" fill="#7cc0f0"/><rect x="716.5" y="287.6" width="17" height="1.6" fill="#7cc0f0"/><rect x="716.5" y="293.6" width="17" height="1.6" fill="#7cc0f0"/><rect x="716.5" y="299.6" width="17" height="1.6" fill="#7cc0f0"/><rect x="716.5" y="305.6" width="17" height="1.6" fill="#7cc0f0"/><rect x="716.5" y="311.6" width="17" height="1.6" fill="#7cc0f0"/><rect x="716.5" y="317.6" width="17" height="1.6" fill="#7cc0f0"/><rect x="716.5" y="323.6" width="17" height="1.6" fill="#7cc0f0"/><rect x="716.5" y="329.6" width="17" height="1.6" fill="#7cc0f0"/><rect x="716.5" y="335.6" width="17" height="1.6" fill="#7cc0f0"/><rect x="716.5" y="341.6" width="17" height="1.6" fill="#7cc0f0"/><rect x="716.5" y="347.6" width="17" height="1.6" fill="#7cc0f0"/><rect x="716.5" y="353.6" width="17" height="1.6" fill="#7cc0f0"/><rect x="716.5" y="359.6" width="17" height="1.6" fill="#7cc0f0"/><rect x="716.5" y="365.6" width="17" height="1.6" fill="#7cc0f0"/><rect x="716.5" y="371.6" width="17" height="1.6" fill="#7cc0f0"/><rect x="716.5" y="377.6" width="17" height="1.6" fill="#7cc0f0"/><rect x="716.5" y="383.6" width="17" height="1.6" fill="#7cc0f0"/><path d="M316.56 388 C306 341.65 318.8 287.06 330 285 C341.2 287.06 354 341.65 343.44 388Z" fill="#4464c4"/><path d="M330 388 V310.75 M330 346.8 l-7.04 -15.45 M330 331.35 l6.4 -14.42" stroke="#2e3f94" stroke-width="1" fill="none"/><path d="M307.8 388 C304.5 348.4 308.5 301.76 312 300 C315.5 301.76 319.5 348.4 316.2 388Z" fill="#32428e"/><path d="M312 388 V322 M312 352.8 l-2.2 -13.2 M312 339.6 l2 -12.32" stroke="#2e3f94" stroke-width="1" fill="none"/><path d="M687.2 388 C674 341.65 690 287.06 704 285 C718 287.06 734 341.65 720.8 388Z" fill="#3f5cc0"/><path d="M704 388 V310.75 M704 346.8 l-8.8 -15.45 M704 331.35 l8 -14.42" stroke="#2e3f94" stroke-width="1" fill="none"/><path d="M582.5 388 C574.25 353.8 584.25 313.52 593 312 C601.75 313.52 611.75 353.8 603.5 388Z" fill="#3d59bb"/><path d="M593 388 V331 M593 357.6 l-5.5 -11.4 M593 346.2 l5 -10.64" stroke="#2e3f94" stroke-width="1" fill="none"/><path d="M607.86 388 C602.25 361.9 609.05 331.16 615 330 C620.95 331.16 627.75 361.9 622.14 388Z" fill="#425fc0"/><path d="M615 388 V344.5 M615 364.8 l-3.74 -8.7 M615 356.1 l3.4 -8.12" stroke="#2e3f94" stroke-width="1" fill="none"/><path d="M650.86 388 C645.25 361.9 652.05 331.16 658 330 C663.95 331.16 670.75 361.9 665.14 388Z" fill="#425fc0"/><path d="M658 388 V344.5 M658 364.8 l-3.74 -8.7 M658 356.1 l3.4 -8.12" stroke="#2e3f94" stroke-width="1" fill="none"/><path d="M502.76 388 C495.5 356.5 504.3 319.4 512 318 C519.7 319.4 528.5 356.5 521.24 388Z" fill="#3f5cbd"/><path d="M512 388 V335.5 M512 360 l-4.84 -10.5 M512 349.5 l4.4 -9.8" stroke="#2e3f94" stroke-width="1" fill="none"/><path d="M717.44 388 C711.5 361.9 718.7 331.16 725 330 C731.3 331.16 738.5 361.9 732.56 388Z" fill="#4562c2"/><path d="M725 388 V344.5 M725 364.8 l-3.96 -8.7 M725 356.1 l3.6 -8.12" stroke="#2e3f94" stroke-width="1" fill="none"/><path d="M471.28 388 C466 358.3 472.4 323.32 478 322 C483.6 323.32 490 358.3 484.72 388Z" fill="#405dbe"/><path d="M478 388 V338.5 M478 361.6 l-3.52 -9.9 M478 351.7 l3.2 -9.24" stroke="#2e3f94" stroke-width="1" fill="none"/><rect x="493" y="324" width="20.5" height="1.6" fill="#cfe2f6" opacity=".85"/><rect x="536" y="324" width="20" height="1.6" fill="#cfe2f6" opacity=".85"/><circle cx="524" cy="324.6" r="4.6" fill="#b9c6ea" opacity=".9"/><circle cx="524" cy="324.6" r="2" fill="#e4e9f8"/><rect x="314.5" y="361" width="420.5" height="24" fill="#e7ebf3"/><rect x="600" y="372" width="135" height="5.5" fill="#efd27c"/><rect x="600" y="377.5" width="135" height="7" fill="#f4f5f9"/><rect x="314.5" y="384.5" width="420.5" height="58" fill="url(#road)"/><path d="M322 430 H358 L360 434.6 H320Z" fill="#f7f8fc"/><path d="M427 430 H466 L468 434.6 H425Z" fill="#f7f8fc"/><path d="M551.5 430 H596 L598 434.6 H549.5Z" fill="#f7f8fc"/><path d="M666.5 430 H717.5 L719.5 434.6 H664.5Z" fill="#f7f8fc"/><circle cx="390" cy="307" r="15.5" fill="#b4bcda" opacity="0.9"/><circle cx="419.5" cy="312.5" r="16.5" fill="#adb8d8" opacity="0.9"/><circle cx="404" cy="322" r="14" fill="#b0bad9" opacity="0.9"/><circle cx="367" cy="322" r="9.5" fill="#bfd3ec" opacity="0.9"/><circle cx="376.5" cy="327" r="10.5" fill="#cdd6ec" opacity="0.92"/><circle cx="436" cy="330" r="13" fill="#b3bedc" opacity="0.9"/><circle cx="392" cy="336" r="15" fill="#bcc5e0" opacity="0.92"/><circle cx="443" cy="337" r="14.5" fill="#bac6e2" opacity="0.92"/><circle cx="418" cy="340" r="15" fill="#b6c0de" opacity="0.92"/><circle cx="373.5" cy="346" r="12" fill="#c4d0ea" opacity="0.93"/><circle cx="401" cy="350" r="12.5" fill="#c9d1e8" opacity="0.95"/><circle cx="417.5" cy="351.5" r="10.5" fill="#ccd4ea" opacity="0.95"/><circle cx="452.5" cy="350" r="13" fill="#c2d6ee" opacity="0.93"/><circle cx="434" cy="353" r="11" fill="#c0cae4" opacity="0.95"/><circle cx="387" cy="356" r="10" fill="#cfd6ec" opacity="0.95"/><circle cx="348" cy="336.5" r="7" fill="#b9c3e0" opacity="0.92"/><circle cx="353.5" cy="341" r="5" fill="#b9c3e0" opacity="0.92"/><circle cx="343.5" cy="341" r="4.6" fill="#b9c3e0" opacity="0.92"/><circle cx="334.5" cy="321" r="7" fill="#bcc4e2" opacity="0.92"/><circle cx="340" cy="326" r="4.8" fill="#bcc4e2" opacity="0.92"/><circle cx="329.6" cy="326" r="4.8" fill="#bcc4e2" opacity="0.92"/><circle cx="470.6" cy="333" r="6.6" fill="#c3cbe6" opacity="0.93"/><circle cx="475" cy="338" r="4.4" fill="#c3cbe6" opacity="0.93"/><circle cx="466.4" cy="338" r="4.4" fill="#c3cbe6" opacity="0.93"/><rect x="396" y="362" width="34" height="18" fill="#eceff6"/><path d="M397 392 C398 384 402 378 412 371 C420 365 428 362.5 440 362.5 L481 362 L524 347.5 L527 349 L496 364.5 L620 364.5 L668 363.5 L677.5 372 L674 398 L668 411 L640 413.5 L420 414 L402 412 C398 408 396.5 400 397 392Z" fill="url(#orng)"/><path d="M559 362.4 L668 362.6 L670 365.4 L559 365.6Z" fill="#eef0f6"/><path d="M492 366 L590 366 L588 408 L490 410Z" fill="#f8a462" opacity=".55"/><path d="M478 408 L600 406 L600 413.6 L478 414Z" fill="#e27a36" opacity=".8"/><path d="M397.5 381 C404 378.5 416 379 423 383 L421 389.5 C412 390.5 403 390 397 388.5Z" fill="#f4f6fb"/><path d="M634.5 367.5 L668 367 L672 377.5 L645 378.2 C640 377 636.5 372 634.5 367.5Z" fill="#b4343a"/><path d="M640 369.5 L664 369.2 L666.5 374.8 L646 375.2Z" fill="#e66a62"/><path d="M424 409 A27.5 27.5 0 0 1 479 409 Z" fill="#2a2224"/><circle cx="451.5" cy="401" r="24.4" fill="#2f2a2c"/><circle cx="451.5" cy="401" r="16.4" fill="#dfe0e6"/><ellipse cx="457.378" cy="392.91" rx="3.1" ry="5.2" fill="#57565e" transform="rotate(36 457.378 392.91)"/><ellipse cx="461.011" cy="404.09" rx="3.1" ry="5.2" fill="#57565e" transform="rotate(108 461.011 404.09)"/><ellipse cx="451.5" cy="411" rx="3.1" ry="5.2" fill="#57565e" transform="rotate(180 451.5 411)"/><ellipse cx="441.989" cy="404.09" rx="3.1" ry="5.2" fill="#57565e" transform="rotate(252 441.989 404.09)"/><ellipse cx="445.622" cy="392.91" rx="3.1" ry="5.2" fill="#57565e" transform="rotate(324 445.622 392.91)"/><circle cx="451.5" cy="401" r="3" fill="#c9cad2"/><path d="M599 408.5 A27.5 27.5 0 0 1 654 408.5 Z" fill="#2a2224"/><circle cx="626.5" cy="400.5" r="24.4" fill="#2f2a2c"/><circle cx="626.5" cy="400.5" r="16.4" fill="#dfe0e6"/><ellipse cx="632.378" cy="392.41" rx="3.1" ry="5.2" fill="#57565e" transform="rotate(36 632.378 392.41)"/><ellipse cx="636.011" cy="403.59" rx="3.1" ry="5.2" fill="#57565e" transform="rotate(108 636.011 403.59)"/><ellipse cx="626.5" cy="410.5" rx="3.1" ry="5.2" fill="#57565e" transform="rotate(180 626.5 410.5)"/><ellipse cx="616.989" cy="403.59" rx="3.1" ry="5.2" fill="#57565e" transform="rotate(252 616.989 403.59)"/><ellipse cx="620.622" cy="392.41" rx="3.1" ry="5.2" fill="#57565e" transform="rotate(324 620.622 392.41)"/><circle cx="626.5" cy="400.5" r="3" fill="#c9cad2"/><rect x="564.3" y="371" width="15.2" height="4.6" rx="2.3" fill="#27305a"/><path d="M563.3 365 L564.5 356 L569.4 355.6 L570 365Z" fill="#1f2a4d"/><path d="M513.6 364.6 C516 358 524 353 534 352 L552 356 L558 364.6Z" fill="#2c5aa6"/><path d="M505 364.6 L530 349.5 L538 353 L520 364.6Z" fill="#2b5ca8"/><path d="M538 357.6 L558 356.6 L560 364.6 L534 364.6Z" fill="#222c52"/><path d="M545.2 358 l2 5 l2.2 -5Z" fill="#e9edf5"/><path d="M534 345 C533 339.5 539 337.5 546 337.6 C553 337.6 557.6 340 557.4 346 C557.2 353.5 551.5 358.8 545.4 358.8 C539.5 358.8 535 353 534 345Z" fill="#f6ccae"/><ellipse cx="557" cy="346.6" rx="2.3" ry="3.1" fill="#f2bc9c"/><path d="M533.2 344 C531.6 334.5 539 330.2 545.5 331 C552.5 329.8 557.4 334.5 556 343.4 C553.6 340.2 549.5 339 544 339.8 C539.5 340.4 535.6 341.6 533.2 344Z" fill="#6b2a17"/><path d="M544.6 331 l2.4 -3.4 l1.6 3.6Z" fill="#f2c230"/><circle cx="540.6" cy="346.4" r="3" fill="#f9e6d8" stroke="#5a3a34" stroke-width=".9"/><circle cx="548.6" cy="346.4" r="3" fill="#f9e6d8" stroke="#5a3a34" stroke-width=".9"/><ellipse cx="550.6" cy="351.6" rx="2.6" ry="1.8" fill="#ee9990"/><path d="M540 354 q3.6 2.4 7.4 .2" stroke="#9a3a30" stroke-width="1" fill="none"/><path d="M478 363.4 L523.6 345.6 L528.6 347.6 L528 351.4 L496 364.6Z" fill="#f3934c"/><path d="M440 362.4 L480 361.6 L523.6 345.2 L526.4 346.6 L484 364.2 L440 365Z" fill="#f1f2f7"/><path d="M495.6 367 L515.4 366 L514.6 370.6 L500 370.8Z" fill="#262c46"/><ellipse cx="508.4" cy="364.8" rx="7.4" ry="3.4" fill="#b9c0cf"/><path d="M247.5 355 L325 354 C333 345.5 343 342 353.5 341.5 C369 344 386 360 396 377 L396.5 399 L386 405.6 L247.5 406.4Z" fill="#79b14d"/><path d="M314.5 406.2 C316 385 330 369 350 369 C368 369 379 384 379.5 405.8Z" fill="#5c9638"/><path d="M247.5 322 C272 321.5 297 333 325 354 L321 356.5 L247.5 355.5Z" fill="#4f7e34"/><path d="M247.5 326 C270 326 292 335.5 314 351.5 L247.5 352.5Z" fill="#8a9ea6"/><path d="M262 327.5 l12 2.8 l-9 21 h-13Z" fill="#a4b5bb" opacity=".6"/><path d="M367.7 364.5 C378 364.5 390 369 394 378.7 C383 378 373 375 367.7 364.5Z" fill="#f4b736"/><path d="M367.7 364.5 C371 374 381 379 394 378.7 L393.3 380.2 C380 380.8 369 375.5 367.7 364.5Z" fill="#2e4a22"/><circle cx="348.4" cy="399.4" r="26.4" fill="#232a3e"/><circle cx="348.4" cy="399.4" r="19.3" fill="#eef1f6"/><circle cx="348.4" cy="399.4" r="15.2" fill="#2c426e"/><rect x="346.9" y="383.9" width="3" height="15.5" fill="#eef1f6" transform="rotate(0 348.4 399.4)"/><rect x="346.9" y="383.9" width="3" height="15.5" fill="#eef1f6" transform="rotate(36 348.4 399.4)"/><rect x="346.9" y="383.9" width="3" height="15.5" fill="#eef1f6" transform="rotate(72 348.4 399.4)"/><rect x="346.9" y="383.9" width="3" height="15.5" fill="#eef1f6" transform="rotate(108 348.4 399.4)"/><rect x="346.9" y="383.9" width="3" height="15.5" fill="#eef1f6" transform="rotate(144 348.4 399.4)"/><rect x="346.9" y="383.9" width="3" height="15.5" fill="#eef1f6" transform="rotate(180 348.4 399.4)"/><rect x="346.9" y="383.9" width="3" height="15.5" fill="#eef1f6" transform="rotate(216 348.4 399.4)"/><rect x="346.9" y="383.9" width="3" height="15.5" fill="#eef1f6" transform="rotate(252 348.4 399.4)"/><rect x="346.9" y="383.9" width="3" height="15.5" fill="#eef1f6" transform="rotate(288 348.4 399.4)"/><rect x="346.9" y="383.9" width="3" height="15.5" fill="#eef1f6" transform="rotate(324 348.4 399.4)"/><circle cx="348.4" cy="399.4" r="5.2" fill="#eef1f6"/><circle cx="348.4" cy="399.4" r="3.3" fill="#1d2338"/></g><rect x="247.5" y="206" width="67" height="200.6" fill="#5b5b5b" opacity=".0"/><defs><clipPath id="lclip"><rect x="247.5" y="200" width="67" height="250"/></clipPath></defs><g clip-path="url(#lclip)"><path d="M247.5 321.6 C272 321 297 332.6 325.4 353.8 L325 406.6 L247.5 406.6Z" fill="#262626" opacity=".48"/><path d="M309 345 C306 330 309 310 313 298 L316 298 V345Z" fill="#262626" opacity=".48"/></g><g id="scntitle"><text x="380 418.5 457 495" y="270.34" font-size="34.5" fill="#fff" font-weight="900">珍爱生命</text><text x="582.5 620.5" y="270.34" font-size="34.5" fill="#fff" font-weight="900">酒驾</text><text stroke="#ee3e44" stroke-width="1.6" x="535.6" y="253.962" font-size="39" fill="#ec4046" font-weight="700" text-anchor="start" letter-spacing="0" transform="translate(535.6 240) skewX(-9) scale(0.68 1) translate(-535.6 -240)">NO</text><text transform="translate(534.5 270.68) scale(1.5 1)" x="0" y="0" font-size="13" fill="#e6cc24" font-weight="900">拒绝</text></g><rect x="320.5" y="214.8" width="9.6" height="7.6" rx="1.2" fill="#fff"/><path d="M330.1 217.6 l3.8 -2.2 v6.4 l-3.8 -2.2Z" fill="#fff"/><text x="339" y="222.3" font-size="9.5" fill="#b9c4e8">1</text><rect x="426" y="278.4" width="8.4" height="6.6" rx="1" fill="#f2f4fa"/><path d="M434.4 280.8 l3.2 -1.8 v5.4 l-3.2 -1.8Z" fill="#f2f4fa"/><text x="443" y="285.75" font-size="10" fill="#c9d2ec" opacity="0.75" font-weight="500">默认镜头</text><rect x="314.5" y="206" width="420.5" height="236.5" fill="none" stroke="#6d2f45" stroke-width="1" stroke-dasharray="4 2" opacity=".8"/></g></svg>
<div style="left:742.5px;top:135.5px;width:35px;height:35px;background:#fff;border-radius:50%;box-shadow:0 0 5px 2px rgba(255,255,255,.35);"></div>
<svg style="left:0px;top:0px;" width="1108" height="200"><path d="M762.2 145.5 l4.6 -1.6 v3 l-3.2 1.1 v9.2 a3.4 3.4 0 1 1 -1.4 -2.7Z" fill="#3d4152"/></svg>
<div style="left:739.8px;top:208.2px;width:43.6px;height:233.4px;background:#fff;border-radius:21.8px;"></div>
<svg style="left:0px;top:0px;" width="1108" height="460"><rect x="755.6" y="233.2" width="9.6" height="7.6" fill="#4a4e60"/><path d="M753.4 234.4 v-3 h3.4 M764 231.4 h3.4 v3 M767.4 239.6 v3 h-3.4 M756.8 242.6 h-3.4 v-3" fill="none" stroke="#3d4152" stroke-width="1.7"/><rect x="753.6" y="272.6" width="12" height="6.6" rx="1.2" fill="#3d4152"/><path d="M757.4 270.6 c2.6 -3 7 -3 9.2 .6 M764.6 268.6 l2.4 2.8 l-3.4 1" fill="none" stroke="#3d4152" stroke-width="1.6"/><rect x="754.6" y="306.8" width="11.6" height="7" rx="1.2" fill="#3d4152"/><path d="M757 306.8 v-2.8 a3.3 3.3 0 0 1 6.5 -0.8" fill="none" stroke="#3d4152" stroke-width="1.7"/><rect x="758" y="309.6" width="4.6" height="1.6" fill="#fff"/><rect x="752.2" y="335.2" width="15.6" height="11.2" rx="1.8" fill="#2b7ce6"/><path d="M756 347.6 h8 l-1.4 2.6 h-5.2Z" fill="#2b7ce6"/><rect x="754.4" y="370.2" width="11" height="14.4" rx="1.6" fill="#555a6c"/><rect x="757.6" y="379" width="4.6" height="3" rx="1" fill="#7d8292"/><circle cx="754.4" cy="412" r="1.3" fill="#3d4152"/><circle cx="760.4" cy="412" r="1.3" fill="#3d4152"/><circle cx="766.4" cy="412" r="1.3" fill="#3d4152"/></svg>
<svg style="left:0px;top:0px;" width="1108" height="400"><path d="M802.5 265 C800 271 787.5 273 786.4 283 V342 C787.5 352 800 354 802.5 360Z" fill="#fff"/><path d="M792.4 305 l4.6 4.8 l-4.6 4.8" fill="none" stroke="#2b2d3a" stroke-width="1.7"/></svg>
<div style="left:734.5px;top:506.6px;width:67.5px;height:38px;background:#fff;border-radius:3px 0 0 0;"></div>
<svg style="left:0px;top:0px;" width="1108" height="560"><svg x="758.5" y="520.5" width="20" height="10.6" viewBox="314.5 206 420.5 236.5" preserveAspectRatio="none"><use href="#scn"/></svg><path d="M751.5 528.5 c2 -2.6 4.6 -3.4 7 -3 v3.6 h-7Z" fill="#3c5a34"/><rect x="790.8" y="512.4" width="7.8" height="6.4" rx="1" fill="#fff" stroke="#2b2d3a" stroke-width="1.3"/><rect x="790.8" y="512.4" width="7.8" height="2" fill="#2b2d3a"/></svg>
<svg style="left:0px;top:0px;" width="1108" height="560"><path d="M511 545 C523 542 521 529.6 534 529.6 H578 C591 529.6 589 542 601 545Z" fill="#fbfcfd"/><path d="M550 534 l5.4 4.8 l5.4 -4.8" fill="none" stroke="#2b2d3a" stroke-width="1.7"/></svg>
<div style="left:802px;top:76px;width:306px;height:468.6px;background:#fff;"></div>
<div style="left:851.4px;top:76px;width:1px;height:468.6px;background:#eceef2;"></div>
<svg style="left:0px;top:0px;" width="1108" height="560"><rect x="821" y="100" width="13.6" height="13" rx="1.6" fill="#3a3d4d"/><path d="M823 110.6 l3.6 -4.4 l2.6 2.8 l1.8 -1.6 l2 3.2Z" fill="#fff"/><circle cx="830.6" cy="104.2" r="1.4" fill="#fff"/><circle cx="827.8" cy="151.6" r="3.5" fill="#1f6fe0"/><path d="M820.6 162 c0 -5.4 3.2 -7 7.2 -7 s7.2 1.6 7.2 7Z" fill="#1f6fe0"/><path d="M824.8 158.6 l3 1.8 l3 -1.8" stroke="#fff" stroke-width="1" fill="none"/><rect x="821.2" y="197.6" width="13.2" height="12.8" rx="1.6" fill="#3a3d4d"/><path d="M823.6 200.4 h8.4 v2.6 h-2.8 v5 h-2.8 v-5 h-2.8Z" fill="#fff"/><circle cx="825.6" cy="250" r="5" fill="#3a3d4d"/><circle cx="830" cy="254" r="5" fill="#3a3d4d" stroke="#fff" stroke-width="1.2"/><path d="M824.6 296.6 l8.8 -2 v10 a2.6 2.2 0 1 1 -1.8 -2.1 v-5.4 l-5.2 1.2 v7.6 a2.6 2.2 0 1 1 -1.8 -2.1Z" fill="#3a3d4d"/><circle cx="827.8" cy="349" r="7" fill="#3a3d4d"/><circle cx="827.8" cy="349" r="3.8" fill="#fff"/><path d="M826.4 346.4 l4 2.6 l-4 2.6Z" fill="#3a3d4d"/><path d="M821 392.6 a1 1 0 0 1 1 -1 h4.4 l1.6 2 h6 a1 1 0 0 1 1 1 v8 a1 1 0 0 1 -1 1 h-12 a1 1 0 0 1 -1 -1Z" fill="#3a3d4d"/><path d="M827.6 447 l1 -7.6 l-7.6 1.6 l3.2 3.2Z" fill="#3a3d4d" transform="rotate(0 827.6 447)"/><path d="M827.6 447 l1 -7.6 l-7.6 1.6 l3.2 3.2Z" fill="#3a3d4d" transform="rotate(90 827.6 447)"/><path d="M827.6 447 l1 -7.6 l-7.6 1.6 l3.2 3.2Z" fill="#3a3d4d" transform="rotate(180 827.6 447)"/><path d="M827.6 447 l1 -7.6 l-7.6 1.6 l3.2 3.2Z" fill="#3a3d4d" transform="rotate(270 827.6 447)"/><circle cx="827.8" cy="495" r="7" fill="none" stroke="#3a3d4d" stroke-width="1.2"/><path d="M824.4 495 h6.8" stroke="#3a3d4d" stroke-width="1.3"/><circle cx="824.2" cy="495" r="1" fill="#3a3d4d"/><circle cx="831.4" cy="495" r="1" fill="#3a3d4d"/><rect x="839.6" y="143.8" width="6.6" height="6" rx="1.4" fill="#f0555e"/><rect x="841.4" y="145.8" width="3" height="2" fill="#f9b9bd"/><rect x="839.6" y="387.6" width="6.6" height="6" rx="1.4" fill="#f0555e"/><rect x="841.4" y="389.6" width="3" height="2" fill="#f9b9bd"/><rect x="839.6" y="435.6" width="6.6" height="6" rx="1.4" fill="#f0555e"/><rect x="841.4" y="437.6" width="3" height="2" fill="#f9b9bd"/><rect x="810.4" y="95.4" width="40" height="437.6" fill="none" stroke="#e23b3b" stroke-width="2"/></svg>
<div style="left:873.5px;top:97px;width:220px;height:32.5px;background:#f2f3f6;border-radius:4px;"></div>
<div style="left:875.6px;top:99px;width:107.6px;height:28.6px;background:#fff;border-radius:3px;"></div>
<div style="left:1061.6px;top:97px;width:22px;height:11px;background:#ef4d55;border-radius:2px;"></div>
<div style="left:870.8px;top:143.6px;width:223.4px;height:118.6px;background:linear-gradient(100deg,#4c3cc6 0%,#5443d6 55%,#5d4ae0 100%);border-radius:6px;"></div>
<svg style="left:0px;top:0px;" width="1108" height="270"><ellipse cx="1036" cy="246.5" rx="56" ry="5.5" fill="#3a2cab" opacity=".75"/><path d="M1046 151.6 C1038 150.5 1034.5 158 1035 166 C1035 172 1033 176 1030.5 179.5 L1040 186 L1064 190 L1075 196 C1073 186 1066 180 1061 174 C1056 167 1058 153 1046 151.6Z" fill="#17121f"/><ellipse cx="1072" cy="243" rx="5.4" ry="4.8" fill="#f6c9b0"/><path d="M1027.4 184 C1032 179.5 1039 178.5 1044 180 C1052 177.5 1064 178 1071 182 C1078 190 1081 208 1080 224 L1078 239.6 L1040 238 L1020 214Z" fill="#e8392f"/><path d="M1030 186 C1020 196 1006 201 992 200.5 L990.6 209.5 C1002 214 1020 212 1034 204Z" fill="#e8392f"/><path d="M979.4 208 c2 -3.4 8 -4.4 11.4 -2.4 l.6 7.4 c-3 3 -8 3.6 -11 1.4Z" fill="#f6c9b0"/><rect x="1040.6" y="172" width="6.4" height="9" fill="#f0b79c"/><ellipse cx="1043.2" cy="166" rx="6.6" ry="8.8" fill="#f8ccb2"/><path d="M1036.6 164 C1037 155 1046 153.4 1050.4 158 C1052 162 1051 168 1049.6 172 C1049 165 1046 160.6 1036.6 164Z" fill="#17121f"/><path d="M1018 176.3 L1025.6 178.6 L1072 240 L1064.6 245.4Z" fill="#f4c431"/><path d="M1018 176.3 l5 1.4 l-2 3.2Z" fill="#f6e2c0"/><path d="M1030.8 193.6 l7.4 -5 l16 21 l-7.4 5.4Z" fill="#2d8fe2"/><path d="M997 229.6 C997 206 1001 180 1012.4 179.6 C1023 180 1026.6 196 1026 212 L1025.6 230.4Z" fill="#15111c"/><path d="M1025.6 229 C1030 214 1056 203 1072 206 C1083 208.6 1084 222 1076 230 C1066 239 1050 246 1040 247.6 L1032 232Z" fill="#15111c"/><path d="M1028 228 L1040 224 L1046 245 L1036 248Z" fill="#2b2538"/><path d="M1062 236.6 l5.4 -3.6 l3.4 9.4 l-4.6 2.4Z" fill="#2d8fe2"/><path d="M989.6 245 C990 238 998 233.6 1006 234 L1016 236 L1017.4 248 L990.6 248.4Z" fill="#e3322b"/><path d="M999 247 c1 -6 5 -10 10 -11" stroke="#fff" stroke-width="1.4" fill="none"/><path d="M1012 246 L1013 230 C1020 227.6 1028 230 1031 236 L1036 247.6Z" fill="#e3322b"/><path d="M1018 245 c2 -5 6 -8 11 -8" stroke="#fff" stroke-width="1.4" fill="none"/><circle cx="993" cy="243.4" r="4.1" fill="#f5d62d"/><ellipse cx="1013.8" cy="228.6" rx="4.8" ry="4" fill="#f5d62d"/><path d="M997 229.4 h28.6 v2.6 h-28.6Z" fill="#2b2538"/></svg>
<svg style="left:0px;top:0px;" width="1108" height="260"><path d="M886 230 h24.6 l-5.6 -4.8" stroke="#fff" stroke-width="2.2" fill="none"/></svg>
<div style="left:872px;top:277px;width:221.4px;height:29px;background:#f2f3f6;border-radius:3px;"></div>
<svg style="left:0px;top:0px;" width="1108" height="310"><path d="M951.6 291.6 h8.4 M955.8 287.4 v8.4" stroke="#3f4351" stroke-width="1.5"/></svg>
<svg style="left:0px;top:0px;" width="1108" height="470"><path d="M1079.6 319.6 l4 3.8 l-4 3.8" stroke="#8a8e99" stroke-width="1.3" fill="none"/><path d="M1079.6 446.6 l4 3.8 l-4 3.8" stroke="#8a8e99" stroke-width="1.3" fill="none"/></svg>
<div style="left:941.8px;top:446px;width:22.4px;height:11.4px;background:#ef4d55;border-radius:2px;"></div>
<div style="left:1104.2px;top:143px;width:1.6px;height:177px;background:#5b5f6b;border-radius:1px;"></div>
<svg style="left:0px;top:0px;" width="1108" height="560"><defs><pattern id="xh" width="9" height="9" patternUnits="userSpaceOnUse"><path d="M0 0 L9 9 M9 0 L0 9" stroke="#e1e4ea" stroke-width="1" fill="none"/></pattern><clipPath id="rpclip"><rect x="860" y="330" width="248" height="214.4"/></clipPath></defs><g clip-path="url(#rpclip)"><rect x="871.3" y="342.5" width="67.5" height="81.3" rx="5" fill="#fff"/><rect x="871.3" y="342.5" width="67.5" height="81.3" rx="5" fill="url(#xh)" stroke="#d9dde5" stroke-width="1"/><rect x="917.8" y="402.9" width="17.6" height="16.6" rx="3" fill="#ef4f4c"/><rect x="922.8" y="406.9" width="7.6" height="8.6" rx="1" fill="none" stroke="#fff" stroke-width="1.3"/><rect x="925.1" y="409.9" width="3" height="3" fill="#fff"/><rect x="948.6" y="342.5" width="68.1" height="81.3" rx="5" fill="#fff"/><rect x="948.6" y="342.5" width="68.1" height="81.3" rx="5" fill="url(#xh)" stroke="#d9dde5" stroke-width="1"/><rect x="995.7" y="402.9" width="17.6" height="16.6" rx="3" fill="#ef4f4c"/><rect x="1000.7" y="406.9" width="7.6" height="8.6" rx="1" fill="none" stroke="#fff" stroke-width="1.3"/><rect x="1003" y="409.9" width="3" height="3" fill="#fff"/><rect x="1026.5" y="342.5" width="67.1" height="81.3" rx="5" fill="#fff"/><rect x="1026.5" y="342.5" width="67.1" height="81.3" rx="5" fill="url(#xh)" stroke="#d9dde5" stroke-width="1"/><rect x="1072.6" y="402.9" width="17.6" height="16.6" rx="3" fill="#ef4f4c"/><rect x="1077.6" y="406.9" width="7.6" height="8.6" rx="1" fill="none" stroke="#fff" stroke-width="1.3"/><rect x="1079.9" y="409.9" width="3" height="3" fill="#fff"/><rect x="871.3" y="469.2" width="67.5" height="82.8" rx="5" fill="#fff"/><rect x="871.3" y="469.2" width="67.5" height="82.8" rx="5" fill="url(#xh)" stroke="#d9dde5" stroke-width="1"/><rect x="917.8" y="531" width="17.6" height="16.6" rx="3" fill="#ef4f4c"/><rect x="922.8" y="535" width="7.6" height="8.6" rx="1" fill="none" stroke="#fff" stroke-width="1.3"/><rect x="925.1" y="538" width="3" height="3" fill="#fff"/><rect x="948.6" y="469.2" width="68.1" height="82.8" rx="5" fill="#fff"/><rect x="948.6" y="469.2" width="68.1" height="82.8" rx="5" fill="url(#xh)" stroke="#d9dde5" stroke-width="1"/><rect x="995.7" y="531" width="17.6" height="16.6" rx="3" fill="#ef4f4c"/><rect x="1000.7" y="535" width="7.6" height="8.6" rx="1" fill="none" stroke="#fff" stroke-width="1.3"/><rect x="1003" y="538" width="3" height="3" fill="#fff"/><rect x="1026.5" y="469.2" width="67.1" height="82.8" rx="5" fill="#fff"/><rect x="1026.5" y="469.2" width="67.1" height="82.8" rx="5" fill="url(#xh)" stroke="#d9dde5" stroke-width="1"/><rect x="1072.6" y="531" width="17.6" height="16.6" rx="3" fill="#ef4f4c"/><rect x="1077.6" y="535" width="7.6" height="8.6" rx="1" fill="none" stroke="#fff" stroke-width="1.3"/><rect x="1079.9" y="538" width="3" height="3" fill="#fff"/><ellipse cx="905" cy="392" rx="11" ry="10" fill="#f8c93a"/><path d="M912 392 c6 0 10 -4 9 -8 c-3 2 -6 4 -9 4Z" fill="#f39a22"/><circle cx="904" cy="371.6" r="15.6" fill="#f0911d"/><rect x="894.6" y="363" width="19" height="18" rx="6" fill="#f9cc3c"/><circle cx="900" cy="370.6" r="1.2" fill="#5a3a10"/><circle cx="908" cy="370.6" r="1.2" fill="#5a3a10"/><ellipse cx="904" cy="375" rx="1.6" ry="1" fill="#c9681a"/><ellipse cx="905" cy="392.6" rx="5.2" ry="6" fill="#fdf3dc"/><path d="M972 372 c2 -6 8 -8 12 -6 c4 2 4 8 1 12 c6 2 8 8 8 14 c0 4 -2 8 -6 9 h-10 c-3 -2 -2 -8 0 -12 c-4 -4 -7 -10 -5 -17Z" fill="#65666c"/><path d="M992 392 c4 -2 6 -8 5 -14 c0 -3 3 -3 3 0 c1 8 -2 16 -7 18Z" fill="#65666c"/><path d="M973 369 l-2 -5 l5 2Z" fill="#65666c"/><circle cx="1061" cy="358.6" r="6" fill="#e8472e"/><ellipse cx="1061" cy="362" rx="4.6" ry="4.4" fill="#f6cfb4"/><path d="M1055.4 358 c1 -5 10 -6 11.6 -0.6 c-4 -1 -8 -0.6 -11.6 0.6Z" fill="#e8472e"/><rect x="1053.6" y="367" width="15" height="24" rx="3" fill="#2f7fd0"/><rect x="1057" y="369" width="8.6" height="30" rx="2" fill="#f4c64a"/><rect x="1057" y="380" width="4" height="19" fill="#e9668a"/><rect x="1057.6" y="399" width="2.6" height="15" fill="#f2a6b6"/><rect x="1062.4" y="399" width="2.6" height="15" fill="#f2a6b6"/><rect x="1055.6" y="413.6" width="5" height="2.2" rx="1" fill="#5a9a3a"/><rect x="1062" y="413.6" width="5" height="2.2" rx="1" fill="#5a9a3a"/><ellipse cx="905.3" cy="479.6" rx="4" ry="5" fill="#f4cdb2"/><path d="M901.3 477.6 c0 -5 8 -5 8 0 c-2.6 -1.4 -5.4 -1.4 -8 0Z" fill="#b5482c"/><path d="M898.6 488 c2 -2.6 11.4 -2.6 13.4 0 l1 20 h-15.4Z" fill="#e9e6e2"/><path d="M900.2 487.6 h10.2 v21 h-10.2Z" fill="#2b5c9c"/><path d="M903.2 487.6 l2.1 5 l2.1 -5Z" fill="#e9e6e2"/><rect x="897.4" y="489" width="2.4" height="22" rx="1" fill="#f4cdb2"/><rect x="910.8" y="489" width="2.4" height="22" rx="1" fill="#f4cdb2"/><rect x="900.2" y="508.4" width="4.6" height="36" fill="#5a3726"/><rect x="905.8" y="508.4" width="4.6" height="36" fill="#5a3726"/><ellipse cx="980.4" cy="491.6" rx="5.4" ry="6.4" fill="#f6d2ba"/><path d="M975 489.6 c0 -7 10.8 -7 10.8 0 c-3.6 -1.8 -7.2 -1.8 -10.8 0Z" fill="#1f2540"/><path d="M973.4 501 c2 -2.6 12 -2.6 14 0 l.6 15 h-15.2Z" fill="#f1f1f5"/><path d="M977.6 499 l2.8 4 l2.8 -4Z" fill="#e2503c"/><rect x="972.4" y="502" width="2.2" height="14" fill="#f6d2ba"/><rect x="986.2" y="502" width="2.2" height="14" fill="#f6d2ba"/><rect x="974.2" y="516" width="12.6" height="13" fill="#2e63ac"/><rect x="975.4" y="529" width="3.6" height="16" fill="#f6d2ba"/><rect x="981.8" y="529" width="3.6" height="16" fill="#f6d2ba"/><ellipse cx="1059.2" cy="480.6" rx="4" ry="5" fill="#f4cdb2"/><path d="M1055.2 478.6 c0 -5 8 -5 8 0 c-2.6 -1.4 -5.4 -1.4 -8 0Z" fill="#b5582c"/><circle cx="1059.2" cy="474.4" r="1.8" fill="#b5582c"/><path d="M1051.6 488.6 c2 -3 13.2 -3 15.2 0 l.8 17 h-16.8Z" fill="#6fbab0"/><rect x="1049.8" y="490" width="2.4" height="18" rx="1" fill="#f4cdb2"/><rect x="1066.2" y="490" width="2.4" height="18" rx="1" fill="#f4cdb2"/><path d="M1052.6 505.4 h13.2 l.8 25 h-14.8Z" fill="#8b5a2c"/><rect x="1055" y="530" width="2.8" height="15" fill="#f4cdb2"/><rect x="1060.8" y="530" width="2.8" height="15" fill="#f4cdb2"/></g></svg>
<div style="left:851.4px;top:543.6px;width:256.6px;height:1px;background:#e6e8ec;"></div>
<div style="left:0px;top:544.6px;width:1108px;height:195.4px;background:#fff;"></div>
<div style="left:0px;top:544px;width:1108px;height:1px;background:#e4e6ea;"></div>
<div style="left:247.5px;top:544px;width:554.5px;height:1px;background:#fff;"></div>
<svg style="left:0px;top:0px;" width="1108" height="590"><defs><pattern id="dots" width="2" height="2" patternUnits="userSpaceOnUse"><rect width="2" height="2" fill="#d9dbdf"/><rect width="1" height="1" fill="#8d919a"/></pattern></defs><rect x="19.6" y="560.6" width="13.4" height="12.4" rx="2.2" fill="url(#dots)" stroke="#5d616e" stroke-width="1.2"/><rect x="81.4" y="560.6" width="9.6" height="8.8" rx="2" fill="#fff" stroke="#5d616e" stroke-width="1.2"/><rect x="85.4" y="564.4" width="9.4" height="8.6" rx="2" fill="#fff" stroke="#5d616e" stroke-width="1.2"/><rect x="143.2" y="560.8" width="13.8" height="12" rx="2" fill="#fff" stroke="#3a83e4" stroke-width="1.3"/><path d="M146.4 564.4 h7.4 M146.4 569.4 h7.4 M148 566.9 h4.2" stroke="#3a83e4" stroke-width="1.1"/><path d="M204 563.6 h9 v-2.4 h8 v9 h-4 v2.6 h-13Z" fill="#fff" stroke="#5d616e" stroke-width="1.2" stroke-linejoin="round"/><path d="M213 563.6 v6.6 h4" fill="none" stroke="#5d616e" stroke-width="1"/><path d="M207 568 h3 M215.6 564 v3 l2.4 -1.5Z" stroke="#5d616e" stroke-width="1" fill="#5d616e"/><path d="M289 563.4 h8 v-2 h8 v9 h-3.6 v2.6 h-12.4Z" fill="#fff" stroke="#5d616e" stroke-width="1.2" stroke-linejoin="round"/><path d="M292.4 569.4 l1.6 -3.6 l1.6 3.6 M299 564.6 l2.4 1.6 l-2.4 1.6Z" stroke="#5d616e" stroke-width="1" fill="none"/><circle cx="382.4" cy="567" r="7.4" fill="#dbe9fb" stroke="#4a90e2" stroke-width="1.4"/><path d="M378.2 567 h8.4" stroke="#3a7fd8" stroke-width="1.6"/><path d="M503.6 563.4 A6.8 6.8 0 1 1 502.8 570" fill="none" stroke="#2b2d3a" stroke-width="1.5"/><path d="M501 562.4 l3.8 -.6 l-.8 3.8Z" fill="#2b2d3a"/><circle cx="509.6" cy="567" r="1.5" fill="#2b2d3a"/><path d="M550.4 560.6 L563.6 567.6 L550.4 574.6Z" fill="#3a3c46" stroke="#3a3c46" stroke-width="1" stroke-linejoin="round"/><path d="M596 572.4 L606 562.6" stroke="#2b2d3a" stroke-width="1.5"/><path d="M602.4 561.4 h4.8 v4.8Z M594.8 568.8 v4.8 h4.8Z" fill="#2b2d3a"/><rect x="616.4" y="557" width="112" height="19.6" rx="3" fill="#fff" stroke="#dfe2e8" stroke-width="1"/><path d="M644 557 v19.6 M702 557 v19.6" stroke="#dfe2e8" stroke-width="1"/><path d="M626.4 567 h7.6 M711 567 h8.4 M715.2 562.8 v8.4" stroke="#3c404e" stroke-width="1.4"/><path d="M731 572.6 v-7 l4 -3.6 l4 3.6 v7Z" fill="none" stroke="#5d616e" stroke-width="1.1"/><circle cx="735" cy="568.4" r="1.8" fill="none" stroke="#5d616e" stroke-width="1"/><path d="M760 571.6 v-8.4 h6 M760 571.6 h8.6 v-3" fill="none" stroke="#5d616e" stroke-width="1.1"/><path d="M763 569.4 l1 -3.4 l6 -5.6 l2 2 l-6 5.8Z" fill="#fff" stroke="#5d616e" stroke-width="1.1"/><path d="M790.4 561.6 h9 M794.8 561.6 v11.4 M792.6 573 h4.4" stroke="#5d616e" stroke-width="1.2"/><path d="M788 568 h12" stroke="#5d616e" stroke-width="1.1"/><rect x="795.6" y="566" width="5.6" height="4" rx="1" fill="#fff" stroke="#5d616e" stroke-width=".9"/><path d="M819.6 561.6 h10.4 M824.6 561.6 v11.4 M822.4 573 h4.4" stroke="#5d616e" stroke-width="1.2"/><path d="M829.6 565.6 v6.4 M828 570 l1.6 2 l1.6 -2" stroke="#5d616e" stroke-width="1" fill="none"/><path d="M850 563 h12 M847 571.4 h12" stroke="#5d616e" stroke-width="1.2"/><circle cx="848.6" cy="563" r="1.9" fill="#fff" stroke="#5d616e" stroke-width="1.1"/><circle cx="860.6" cy="571.4" r="1.9" fill="#fff" stroke="#5d616e" stroke-width="1.1"/><rect x="886.8" y="561.2" width="15.4" height="11.6" rx="2" fill="#fff" stroke="#3c404e" stroke-width="1.2"/><path d="M891 567 h7" stroke="#3c404e" stroke-width="1.1"/><circle cx="890.8" cy="567" r="1.2" fill="#3c404e"/><circle cx="898.2" cy="567" r="1.2" fill="#3c404e"/><rect x="916.6" y="561.2" width="16" height="11.6" rx="2" fill="#fff" stroke="#3c404e" stroke-width="1.2"/><rect x="921" y="564.6" width="7.4" height="5" fill="none" stroke="#3c404e" stroke-width=".9"/><path d="M921 564.6 l7.4 5" stroke="#3c404e" stroke-width=".8"/><circle cx="955.3" cy="567" r="6.8" fill="#fff" stroke="#3c404e" stroke-width="1.1"/><path d="M952.2 567 h6.2" stroke="#3c404e" stroke-width="1.1"/><path d="M980 567 H1061.4" stroke="#cfd6e2" stroke-width="1.2"/><circle cx="975" cy="567" r="4" fill="#fff" stroke="#3a83e4" stroke-width="1.5"/><circle cx="1083" cy="567" r="6.8" fill="#fff" stroke="#3c404e" stroke-width="1.1"/><path d="M1080.6 567 h4.8 M1083 564.6 v4.8" stroke="#3c404e" stroke-width="1"/></svg>
<div style="left:0px;top:590.4px;width:1108px;height:1px;background:#e6e8ec;"></div>
<div style="left:194.4px;top:590.4px;width:1px;height:150px;background:#e3e5ea;"></div>
<svg style="left:0px;top:0px;" width="1108" height="625"><path d="M10.6 601.4 a1.6 1.6 0 0 1 1.6 -1.6 h3.4 l1.8 2 h4.4 a1.6 1.6 0 0 1 1.6 1.6 v6 a1.6 1.6 0 0 1 -1.6 1.6 h-9.6 a1.6 1.6 0 0 1 -1.6 -1.6Z" fill="none" stroke="#4a4e5c" stroke-width="1.1"/><path d="M17 604.4 v4.4 M14.8 606.8 l2.2 2.2 l2.2 -2.2" stroke="#4a4e5c" stroke-width="1.1" fill="none"/><path d="M35 601.4 a1.6 1.6 0 0 1 1.6 -1.6 h3.4 l1.8 2 h4.4 a1.6 1.6 0 0 1 1.6 1.6 v1.6 M35 601.4 v8 a1.6 1.6 0 0 0 1.6 1.6 h7" fill="none" stroke="#4a4e5c" stroke-width="1.1"/><circle cx="46.2" cy="609.4" r="1.5" fill="#4a4e5c"/><path d="M63 599.6 h6 M66 599.6 v10 M64 607.4 l2 2.4 l2 -2.4" stroke="#b9bdc6" stroke-width="1.1" fill="none"/><path d="M86.4 611 h7 M90 610.6 v-10 M88 602.8 l2 -2.4 l2 2.4" stroke="#b9bdc6" stroke-width="1.1" fill="none"/><rect x="117" y="601" width="10" height="10" rx="2" fill="none" stroke="#b9bdc6" stroke-width="1.1"/><path d="M119.6 600 h4.8" stroke="#b9bdc6" stroke-width="1.6"/><rect x="121" y="604.6" width="2" height="3" fill="#b9bdc6"/><rect x="144.4" y="604" width="9" height="5.6" rx="1" fill="#4b5b92"/><path d="M146.2 604 v-1.4 a2.7 2.7 0 0 1 5.4 0 v1.4" fill="none" stroke="#4b5b92" stroke-width="1.5"/><path d="M170.6 605.2 c3 -4.6 8.8 -4.6 11.8 0 c-3 4.6 -8.8 4.6 -11.8 0Z" fill="#4b5b92"/><circle cx="176.5" cy="605.2" r="2.1" fill="#c9d0e6"/><rect x="194.40" y="610.8" width="1" height="9" fill="#b4b8c2"/><rect x="207.43" y="615.6" width="1" height="4.2" fill="#d3d6dd"/><rect x="220.46" y="615.6" width="1" height="4.2" fill="#d3d6dd"/><rect x="233.50" y="615.6" width="1" height="4.2" fill="#d3d6dd"/><rect x="246.53" y="615.6" width="1" height="4.2" fill="#d3d6dd"/><rect x="259.56" y="615.6" width="1" height="4.2" fill="#d3d6dd"/><rect x="272.59" y="615.6" width="1" height="4.2" fill="#d3d6dd"/><rect x="285.62" y="615.6" width="1" height="4.2" fill="#d3d6dd"/><rect x="298.66" y="615.6" width="1" height="4.2" fill="#d3d6dd"/><rect x="311.69" y="615.6" width="1" height="4.2" fill="#d3d6dd"/><rect x="324.72" y="610.8" width="1" height="9" fill="#b4b8c2"/><rect x="337.75" y="615.6" width="1" height="4.2" fill="#d3d6dd"/><rect x="350.78" y="615.6" width="1" height="4.2" fill="#d3d6dd"/><rect x="363.82" y="615.6" width="1" height="4.2" fill="#d3d6dd"/><rect x="376.85" y="615.6" width="1" height="4.2" fill="#d3d6dd"/><rect x="389.88" y="615.6" width="1" height="4.2" fill="#d3d6dd"/><rect x="402.91" y="615.6" width="1" height="4.2" fill="#d3d6dd"/><rect x="415.94" y="615.6" width="1" height="4.2" fill="#d3d6dd"/><rect x="428.98" y="615.6" width="1" height="4.2" fill="#d3d6dd"/><rect x="442.01" y="615.6" width="1" height="4.2" fill="#d3d6dd"/><rect x="455.04" y="610.8" width="1" height="9" fill="#b4b8c2"/><rect x="468.07" y="615.6" width="1" height="4.2" fill="#d3d6dd"/><rect x="481.10" y="615.6" width="1" height="4.2" fill="#d3d6dd"/><rect x="494.14" y="615.6" width="1" height="4.2" fill="#d3d6dd"/><rect x="507.17" y="615.6" width="1" height="4.2" fill="#d3d6dd"/><rect x="520.20" y="615.6" width="1" height="4.2" fill="#d3d6dd"/><rect x="533.23" y="615.6" width="1" height="4.2" fill="#d3d6dd"/><rect x="546.26" y="615.6" width="1" height="4.2" fill="#d3d6dd"/><rect x="559.30" y="615.6" width="1" height="4.2" fill="#d3d6dd"/><rect x="572.33" y="615.6" width="1" height="4.2" fill="#d3d6dd"/><rect x="585.36" y="610.8" width="1" height="9" fill="#b4b8c2"/><rect x="598.39" y="615.6" width="1" height="4.2" fill="#d3d6dd"/><rect x="611.42" y="615.6" width="1" height="4.2" fill="#d3d6dd"/><rect x="624.46" y="615.6" width="1" height="4.2" fill="#d3d6dd"/><rect x="637.49" y="615.6" width="1" height="4.2" fill="#d3d6dd"/><rect x="650.52" y="615.6" width="1" height="4.2" fill="#d3d6dd"/><rect x="663.55" y="615.6" width="1" height="4.2" fill="#d3d6dd"/><rect x="676.58" y="615.6" width="1" height="4.2" fill="#d3d6dd"/><rect x="689.62" y="615.6" width="1" height="4.2" fill="#d3d6dd"/><rect x="702.65" y="615.6" width="1" height="4.2" fill="#d3d6dd"/><rect x="715.68" y="610.8" width="1" height="9" fill="#b4b8c2"/><rect x="728.71" y="615.6" width="1" height="4.2" fill="#d3d6dd"/><rect x="741.74" y="615.6" width="1" height="4.2" fill="#d3d6dd"/><rect x="754.78" y="615.6" width="1" height="4.2" fill="#d3d6dd"/><rect x="767.81" y="615.6" width="1" height="4.2" fill="#d3d6dd"/><rect x="780.84" y="615.6" width="1" height="4.2" fill="#d3d6dd"/><rect x="793.87" y="615.6" width="1" height="4.2" fill="#d3d6dd"/><rect x="806.90" y="615.6" width="1" height="4.2" fill="#d3d6dd"/><rect x="819.94" y="615.6" width="1" height="4.2" fill="#d3d6dd"/><rect x="832.97" y="615.6" width="1" height="4.2" fill="#d3d6dd"/><rect x="846.00" y="610.8" width="1" height="9" fill="#b4b8c2"/><rect x="859.03" y="615.6" width="1" height="4.2" fill="#d3d6dd"/><rect x="872.06" y="615.6" width="1" height="4.2" fill="#d3d6dd"/><rect x="885.10" y="615.6" width="1" height="4.2" fill="#d3d6dd"/><rect x="898.13" y="615.6" width="1" height="4.2" fill="#d3d6dd"/><rect x="911.16" y="615.6" width="1" height="4.2" fill="#d3d6dd"/><rect x="924.19" y="615.6" width="1" height="4.2" fill="#d3d6dd"/><rect x="937.22" y="615.6" width="1" height="4.2" fill="#d3d6dd"/><rect x="950.26" y="615.6" width="1" height="4.2" fill="#d3d6dd"/><rect x="963.29" y="615.6" width="1" height="4.2" fill="#d3d6dd"/><rect x="976.32" y="610.8" width="1" height="9" fill="#b4b8c2"/><rect x="989.35" y="615.6" width="1" height="4.2" fill="#d3d6dd"/><rect x="1002.38" y="615.6" width="1" height="4.2" fill="#d3d6dd"/><rect x="1015.42" y="615.6" width="1" height="4.2" fill="#d3d6dd"/><rect x="1028.45" y="615.6" width="1" height="4.2" fill="#d3d6dd"/><rect x="1041.48" y="615.6" width="1" height="4.2" fill="#d3d6dd"/><rect x="1054.51" y="615.6" width="1" height="4.2" fill="#d3d6dd"/><rect x="1067.54" y="615.6" width="1" height="4.2" fill="#d3d6dd"/><rect x="1080.58" y="615.6" width="1" height="4.2" fill="#d3d6dd"/><rect x="1093.61" y="615.6" width="1" height="4.2" fill="#d3d6dd"/></svg>
<div style="left:0px;top:619.6px;width:1100.4px;height:27.2px;background:#edeff4;"></div>
<div style="left:0px;top:646.8px;width:1100.4px;height:29.4px;background:#edeff4;"></div>
<div style="left:0px;top:646.4px;width:1100.4px;height:1px;background:#dcdfe6;"></div>
<div style="left:0px;top:675.8px;width:1100.4px;height:1px;background:#d5d8df;"></div>
<div style="left:0px;top:704.2px;width:1100.4px;height:1px;background:#e4e6ea;"></div>
<div style="left:0px;top:724.6px;width:1100.4px;height:1px;background:#e4e6ea;"></div>
<div style="left:194.4px;top:619.6px;width:1px;height:120.4px;background:#dfe2e8;"></div>
<div style="left:1100.4px;top:590.4px;width:1px;height:150px;background:#e6e8ec;"></div>
<div style="left:1103.4px;top:621px;width:2.6px;height:46px;background:#c9cbd0;border-radius:1.3px;"></div>
<svg style="left:0px;top:0px;" width="1108" height="740"><rect x="6.2" y="628.8" width="12.6" height="10.4" rx="1.2" fill="#dfe1e6" stroke="#6d7180" stroke-width="1.1"/><path d="M21 630.6 v6.8 M23.2 630 v8" stroke="#6d7180" stroke-width="1"/><rect x="8" y="656" width="13" height="12.6" rx="2" fill="#fff" stroke="#6d7180" stroke-width="1.1"/><path d="M11.4 659.6 l6.2 5.4 M17.6 659.6 l-6.2 5.4" stroke="#6d7180" stroke-width="1"/><path d="M68.6 667.6 v-6 h3.4 v6 M72 667.6 v-3.6 h3.4 v3.6 M68 667.8 h10 M74.6 660.6 l2.6 -2.6 M75.2 657.8 h2.2 v2.2" fill="none" stroke="#5f7fb4" stroke-width="1"/><path d="M95 657.6 h8 v2.6 l-1.6 1.8 l1.6 1.8 v3.6 h-8 v-3.6 l1.6 -1.8 l-1.6 -1.8Z" fill="none" stroke="#3c404e" stroke-width="1.2"/><path d="M121 667.6 v-7.6 a2 2 0 0 1 4 0 v1.6 M124.6 667.6 v-4.6 h4.4 v4.6 M120.4 667.8 h9.6" fill="none" stroke="#5f7fb4" stroke-width="1"/><circle cx="120" cy="634" r="7.6" fill="#1f6fe0"/><circle cx="144.4" cy="634" r="1.25" fill="#2b2d3a"/><circle cx="171.6" cy="634" r="1.25" fill="#2b2d3a"/><circle cx="144.4" cy="662" r="1.25" fill="#2b2d3a"/><circle cx="171.6" cy="662" r="1.25" fill="#2b2d3a"/><circle cx="144.4" cy="690.2" r="1.25" fill="#2b2d3a"/><circle cx="171.6" cy="690.2" r="1.25" fill="#2b2d3a"/><circle cx="144.4" cy="719" r="1.25" fill="#2b2d3a"/><circle cx="171.6" cy="719" r="1.25" fill="#2b2d3a"/><rect x="195" y="623" width="129.8" height="22.6" rx="1.5" fill="#4b92e4"/><rect x="512.8" y="623" width="98.6" height="22.6" rx="1.5" fill="#4b92e4"/><defs><linearGradient id="clipg" x1="0" y1="0" x2="1" y2="1"><stop offset="0" stop-color="#4a88d6"/><stop offset="1" stop-color="#5ea2e4"/></linearGradient></defs><rect x="793" y="679" width="104.4" height="21.4" rx="1" fill="url(#clipg)"/><rect x="793" y="707.6" width="104.4" height="17" fill="url(#clipg)"/><rect x="1035" y="679" width="65" height="21.4" rx="1" fill="url(#clipg)"/><rect x="1035" y="707.6" width="65" height="17" fill="url(#clipg)"/><path d="M228.4 654.4 L236 662 L228.4 669.6 L220.8 662Z" fill="#eaf6e6" stroke="#3fa33a" stroke-width="2.3" stroke-linejoin="round"/><rect x="225.9" y="659.5" width="5" height="5" fill="#4db848" transform="rotate(45 228.4 662)"/><path d="M646.4 626.4 L654 634 L646.4 641.6 L638.8 634Z" fill="#eaf6e6" stroke="#3fa33a" stroke-width="2.3" stroke-linejoin="round"/><rect x="643.9" y="631.5" width="5" height="5" fill="#4db848" transform="rotate(45 646.4 634)"/><path d="M932.4 682.4 L940 690 L932.4 697.6 L924.8 690Z" fill="#eaf6e6" stroke="#3fa33a" stroke-width="2.3" stroke-linejoin="round"/><rect x="929.9" y="687.5" width="5" height="5" fill="#4db848" transform="rotate(45 932.4 690)"/><path d="M932.4 711 L940 718.6 L932.4 726.2 L924.8 718.6Z" fill="#eaf6e6" stroke="#3fa33a" stroke-width="2.3" stroke-linejoin="round"/><rect x="929.9" y="716.1" width="5" height="5" fill="#4db848" transform="rotate(45 932.4 718.6)"/><rect x="968.9" y="612" width="1.3" height="113" fill="#e5484d"/><path d="M961.6 601 a2 2 0 0 1 2 -2 h12 a2 2 0 0 1 2 2 v10.6 l-8 8.6 l-8 -8.6Z" fill="#2478e6"/><rect x="966.6" y="603.6" width="1.7" height="6.4" fill="#8fc0f6"/><rect x="970.6" y="603.6" width="1.7" height="6.4" fill="#8fc0f6"/></svg>
<svg style="left:0px;top:0px;" width="60" height="740"><text x="8.2" y="696" font-size="16" fill="#3c4256" style="font-family:'Liberation Serif',serif">T</text><text x="8.2" y="724.6" font-size="16" fill="#3c4256" style="font-family:'Liberation Serif',serif">T</text></svg>
<div style="left:0px;top:725px;width:1108px;height:15px;background:#fff;"></div>
<div style="left:0px;top:724.6px;width:1108px;height:1px;background:#e4e6ea;"></div>
<svg style="left:0px;top:0px;" width="200" height="740"><rect x="170.6" y="729.4" width="6.6" height="11" rx="1" fill="#d5d7dc" stroke="#4a4e5c" stroke-width="1.1"/><rect x="175.4" y="731.4" width="6.4" height="10" rx="1" fill="#fff" stroke="#4a4e5c" stroke-width="1.1"/></svg>
<span style="left:29.5px;top:3.9px;font-size:11.5px">文件</span>
<span style="left:70px;top:3.9px;font-size:11.5px">编辑</span>
<span style="left:111px;top:3.9px;font-size:11.5px">操作</span>
<span style="left:151px;top:3.9px;font-size:11.5px">时间轴</span>
<span style="left:204.5px;top:3.9px;font-size:11.5px">帮助</span>
<span style="left:447px;top:3.78px;font-size:11.7px">珍爱生命,拒绝酒驾 - 万彩动画大师 3.0.301</span>
<span style="left:928px;top:3.3px;font-size:12px">升级账户</span>
<span style="left:970.5px;top:3.9px;font-size:11.5px">登录/注册</span>
<span style="left:17px;top:42.2px;font-size:11px">返回主页</span>
<span style="left:389.7px;top:48.7px;font-size:11.5px">新建</span>
<span style="left:456.7px;top:48.7px;font-size:11.5px">预览</span>
<span style="left:523.4px;top:48.7px;font-size:11.5px">撤销</span>
<span style="left:585.3px;top:48.7px;font-size:11.5px">恢复</span>
<span style="left:652px;top:48.7px;font-size:11.5px">保存</span>
<span style="left:714.7px;top:48.7px;font-size:11.5px">发布</span>
<span style="left:918.5px;top:41.84px;font-size:11.6px">用户反馈</span>
<span style="left:1008px;top:41.96px;font-size:11.4px">历史</span>
<span style="left:1075.5px;top:41.96px;font-size:11.4px">设置</span>
<span style="left:88px;top:100.52px;font-size:11.8px">新建场景</span>
<span style="left:42.5px;top:253.28px;font-size:11.2px">未命名</span>
<span style="left:53px;top:287.04px;font-size:11.6px">矩形展开</span>
<span style="left:42.5px;top:421.08px;font-size:11.2px">未命名</span>
<span style="left:53px;top:455.54px;font-size:11.6px">分割</span>
<span style="left:827.6px;top:117.04px;font-size:11.6px">图片</span>
<span style="left:827.6px;top:165.44px;font-size:11.6px">角色</span>
<span style="left:827.6px;top:213.64px;font-size:11.6px">文本</span>
<span style="left:827.6px;top:262.64px;font-size:11.6px">图形</span>
<span style="left:827.6px;top:311.04px;font-size:11.6px">音乐</span>
<span style="left:827.6px;top:358.64px;font-size:11.6px">视频</span>
<span style="left:827.6px;top:408.84px;font-size:11.6px">素材</span>
<span style="left:827.6px;top:456.64px;font-size:11.6px">元件</span>
<span style="left:827.6px;top:505.64px;font-size:11.6px">更多</span>
<span style="left:930px;top:107.24px;font-size:11.6px">单人角色</span>
<span style="left:1036.8px;top:107.24px;font-size:11.6px">群演角色</span>
<span style="left:881.6px;top:174.28px;font-size:16.2px">定制人物</span>
<span style="left:881.6px;top:200.56px;font-size:12.4px">赠送骨骼专业版</span>
<span style="left:966px;top:284.84px;font-size:11.6px">添加角色</span>
<span style="left:872.6px;top:316.56px;font-size:11.4px">官方角色[101]</span>
<span style="left:1053px;top:316.56px;font-size:11.4px">所有</span>
<span style="left:872.6px;top:444.36px;font-size:11.4px">简易角色(28)</span>
<span style="left:1053px;top:444.36px;font-size:11.4px">所有</span>
<span style="left:39px;top:560.16px;font-size:11.4px">背景</span>
<span style="left:101px;top:560.16px;font-size:11.4px">前景</span>
<span style="left:163.2px;top:560.04px;font-size:11.6px">字幕</span>
<span style="left:227px;top:560.16px;font-size:11.4px">语音合成</span>
<span style="left:312px;top:560.16px;font-size:11.4px">语音识别</span>
<span style="left:36px;top:627.16px;font-size:11.4px">镜头</span>
<span style="left:36px;top:655.16px;font-size:11.4px">字幕</span>
<span style="left:36px;top:712.36px;font-size:11.4px">拒绝</span>
<span style="left:259.6px;top:627.48px;font-size:11.2px">默认镜头</span>
<span style="left:562px;top:627.48px;font-size:11.2px">1 镜头 1</span>
<span style="left:845.2px;top:682.96px;font-size:11.4px">形象渐入</span>
<span style="left:845.2px;top:710.36px;font-size:11.4px">形象渐入</span>
<span style="left:1067.6px;top:682.96px;font-size:11.4px">一直显示</span>
<span style="left:1067.6px;top:710.36px;font-size:11.4px">一直显示</span>
<span style="left:-3px;top:728.8px;font-size:12px">当前场景: 01</span>
<svg style="left:0;top:0;pointer-events:none" width="1108" height="740"><text x="29.5" y="15.11" font-size="11.5" fill="#fff" font-weight="700">文件</text>
<text x="70" y="15.11" font-size="11.5" fill="#fff" font-weight="700">编辑</text>
<text x="111" y="15.11" font-size="11.5" fill="#fff" font-weight="700">操作</text>
<text x="151" y="15.11" font-size="11.5" fill="#fff" font-weight="700">时间轴</text>
<text x="204.5" y="15.11" font-size="11.5" fill="#fff" font-weight="700">帮助</text>
<text x="447" y="15.19" font-size="11.7" fill="#fff" font-weight="700">珍爱生命,拒绝酒驾 - 万彩动画大师 3.0.301</text>
<text x="904" y="15" font-size="12" fill="#fff" font-weight="700">升级账户</text>
<text x="970.5" y="15.11" font-size="11.5" fill="#fff" font-weight="700">登录/注册</text>
<text x="17" y="52.92" font-size="11" fill="#4a4f5a" font-weight="500">返回主页</text>
<text x="378.2" y="59.91" font-size="11.5" fill="#454955" font-weight="500">新建</text>
<text x="445.2" y="59.91" font-size="11.5" fill="#454955" font-weight="500">预览</text>
<text x="511.9" y="59.91" font-size="11.5" fill="#a9adb6" font-weight="500">撤销</text>
<text x="573.8" y="59.91" font-size="11.5" fill="#a9adb6" font-weight="500">恢复</text>
<text x="640.5" y="59.91" font-size="11.5" fill="#454955" font-weight="500">保存</text>
<text x="703.2" y="59.91" font-size="11.5" fill="#454955" font-weight="500">发布</text>
<text x="918.5" y="53.15" font-size="11.6" fill="#454955" font-weight="500">用户反馈</text>
<text x="1008" y="53.07" font-size="11.4" fill="#454955" font-weight="500">历史</text>
<text x="1075.5" y="53.07" font-size="11.4" fill="#454955" font-weight="500">设置</text>
<text x="88" y="112.02" font-size="11.8" fill="#fff" font-weight="700">新建场景</text>
<text x="16" y="217.717" font-size="11.5" fill="#3a7be0" font-weight="400" text-anchor="start" letter-spacing="0">01</text>
<text x="42.5" y="264.2" font-size="11.2" fill="#4a4f5c" font-weight="500">未命名</text>
<text x="190" y="264.01" font-size="11.2" fill="#6d7282" font-weight="400" text-anchor="start" letter-spacing="0">00:05</text>
<text x="53" y="298.35" font-size="11.6" fill="#3f4452" font-weight="500">矩形展开</text>
<text x="190.5" y="297.938" font-size="11" fill="#5a5f6c" font-weight="400" text-anchor="start" letter-spacing="0">2(s)</text>
<text x="16" y="385.117" font-size="11.5" fill="#5a5f6a" font-weight="400" text-anchor="start" letter-spacing="0">02</text>
<text x="42.5" y="432" font-size="11.2" fill="#4a4f5c" font-weight="500">未命名</text>
<text x="190" y="431.81" font-size="11.2" fill="#6d7282" font-weight="400" text-anchor="start" letter-spacing="0">00:07</text>
<text x="53" y="466.85" font-size="11.6" fill="#3f4452" font-weight="500">分割</text>
<text x="190.5" y="466.438" font-size="11" fill="#5a5f6c" font-weight="400" text-anchor="start" letter-spacing="0">2(s)</text>
<text x="69" y="535.117" font-size="11.5" fill="#3f4866" font-weight="400" text-anchor="start" letter-spacing="0">00:05.94</text>
<text x="134" y="535.117" font-size="11.5" fill="#3f4866" font-weight="400" text-anchor="start" letter-spacing="0">/ 01:38.56</text>
<text x="816" y="128.35" font-size="11.6" fill="#3a3d4d" font-weight="500">图片</text>
<text x="816" y="176.75" font-size="11.6" fill="#1f6fe0" font-weight="500">角色</text>
<text x="816" y="224.95" font-size="11.6" fill="#3a3d4d" font-weight="500">文本</text>
<text x="816" y="273.95" font-size="11.6" fill="#3a3d4d" font-weight="500">图形</text>
<text x="816" y="322.35" font-size="11.6" fill="#3a3d4d" font-weight="500">音乐</text>
<text x="816" y="369.95" font-size="11.6" fill="#3a3d4d" font-weight="500">视频</text>
<text x="816" y="420.15" font-size="11.6" fill="#3a3d4d" font-weight="500">素材</text>
<text x="816" y="467.95" font-size="11.6" fill="#3a3d4d" font-weight="500">元件</text>
<text x="816" y="516.95" font-size="11.6" fill="#3a3d4d" font-weight="500">更多</text>
<text x="906.8" y="118.55" font-size="11.6" fill="#2a7be2" font-weight="500">单人角色</text>
<text x="1013.6" y="118.55" font-size="11.6" fill="#474b57" font-weight="500">群演角色</text>
<text x="1072.6" y="105.249" font-size="7.4" fill="#fff" font-weight="700" text-anchor="middle" letter-spacing="0">NEW</text>
<text x="881.6" y="190.07" font-size="16.2" fill="#fff" font-weight="700" letter-spacing="0.2">定制人物</text>
<text x="881.6" y="212.65" font-size="12.4" fill="#f1effd" font-weight="700" letter-spacing="0.55">赠送骨骼专业版</text>
<text x="966" y="296.15" font-size="11.6" fill="#3f4351" font-weight="500">添加角色</text>
<text x="872.6" y="327.67" font-size="11.4" fill="#3a3e4c" font-weight="500">官方角色[101]</text>
<text x="1053" y="327.67" font-size="11.4" fill="#8a8e99" font-weight="400">所有</text>
<text x="872.6" y="455.47" font-size="11.4" fill="#3a3e4c" font-weight="500">简易角色(28)</text>
<text x="953" y="454.449" font-size="7.4" fill="#fff" font-weight="700" text-anchor="middle" letter-spacing="0">NEW</text>
<text x="1053" y="455.47" font-size="11.4" fill="#8a8e99" font-weight="400">所有</text>
<text x="39" y="571.27" font-size="11.4" fill="#3c404e" font-weight="500">背景</text>
<text x="101" y="571.27" font-size="11.4" fill="#3c404e" font-weight="500">前景</text>
<text x="163.2" y="571.35" font-size="11.6" fill="#2a78e2" font-weight="700">字幕</text>
<text x="227" y="571.27" font-size="11.4" fill="#3c404e" font-weight="500">语音合成</text>
<text x="312" y="571.27" font-size="11.4" fill="#3c404e" font-weight="500">语音识别</text>
<text x="672.4" y="571.081" font-size="11.4" fill="#3f4866" font-weight="400" text-anchor="middle" letter-spacing="0">00:06.94</text>
<text x="198.5" y="602.965" font-size="9.4" fill="#30333f" font-weight="400" text-anchor="start" letter-spacing="0">0s</text>
<text x="320.62" y="602.965" font-size="9.4" fill="#30333f" font-weight="400" text-anchor="start" letter-spacing="0">1s</text>
<text x="450.94" y="602.965" font-size="9.4" fill="#30333f" font-weight="400" text-anchor="start" letter-spacing="0">2s</text>
<text x="581.26" y="602.965" font-size="9.4" fill="#30333f" font-weight="400" text-anchor="start" letter-spacing="0">3s</text>
<text x="711.58" y="602.965" font-size="9.4" fill="#30333f" font-weight="400" text-anchor="start" letter-spacing="0">4s</text>
<text x="841.9" y="602.965" font-size="9.4" fill="#30333f" font-weight="400" text-anchor="start" letter-spacing="0">5s</text>
<text x="972.22" y="602.965" font-size="9.4" fill="#30333f" font-weight="400" text-anchor="start" letter-spacing="0">6s</text>
<text x="1091.14" y="602.965" font-size="9.4" fill="#30333f" font-weight="400" text-anchor="start" letter-spacing="0">7s</text>
<text x="120" y="638.496" font-size="12" fill="#fff" font-weight="700" text-anchor="middle" letter-spacing="0">?</text>
<text x="36" y="638.27" font-size="11.4" fill="#30333f" font-weight="500">镜头</text>
<text x="36" y="666.27" font-size="11.4" fill="#30333f" font-weight="700">字幕</text>
<text x="36" y="694.138" font-size="11" fill="#30333f" font-weight="400" text-anchor="start" letter-spacing="0">NO</text>
<text x="36" y="723.48" font-size="11.4" fill="#30333f" font-weight="500">拒绝</text>
<text x="237.2" y="638.4" font-size="11.2" fill="#fff" font-weight="700">默认镜头</text>
<text x="541.65" y="638.4" font-size="11.2" fill="#fff" font-weight="700">1 镜头 1</text>
<text x="822.4" y="694.07" font-size="11.4" fill="#fff" font-weight="700">形象渐入</text>
<text x="822.4" y="721.48" font-size="11.4" fill="#fff" font-weight="700">形象渐入</text>
<text x="1044.8" y="694.07" font-size="11.4" fill="#fff" font-weight="700">一直显示</text>
<text x="1044.8" y="721.48" font-size="11.4" fill="#fff" font-weight="700">一直显示</text>
<text x="-3" y="740.5" font-size="12" fill="#30333f" font-weight="500">当前场景: 01</text></svg>
</div>
</body></html>
